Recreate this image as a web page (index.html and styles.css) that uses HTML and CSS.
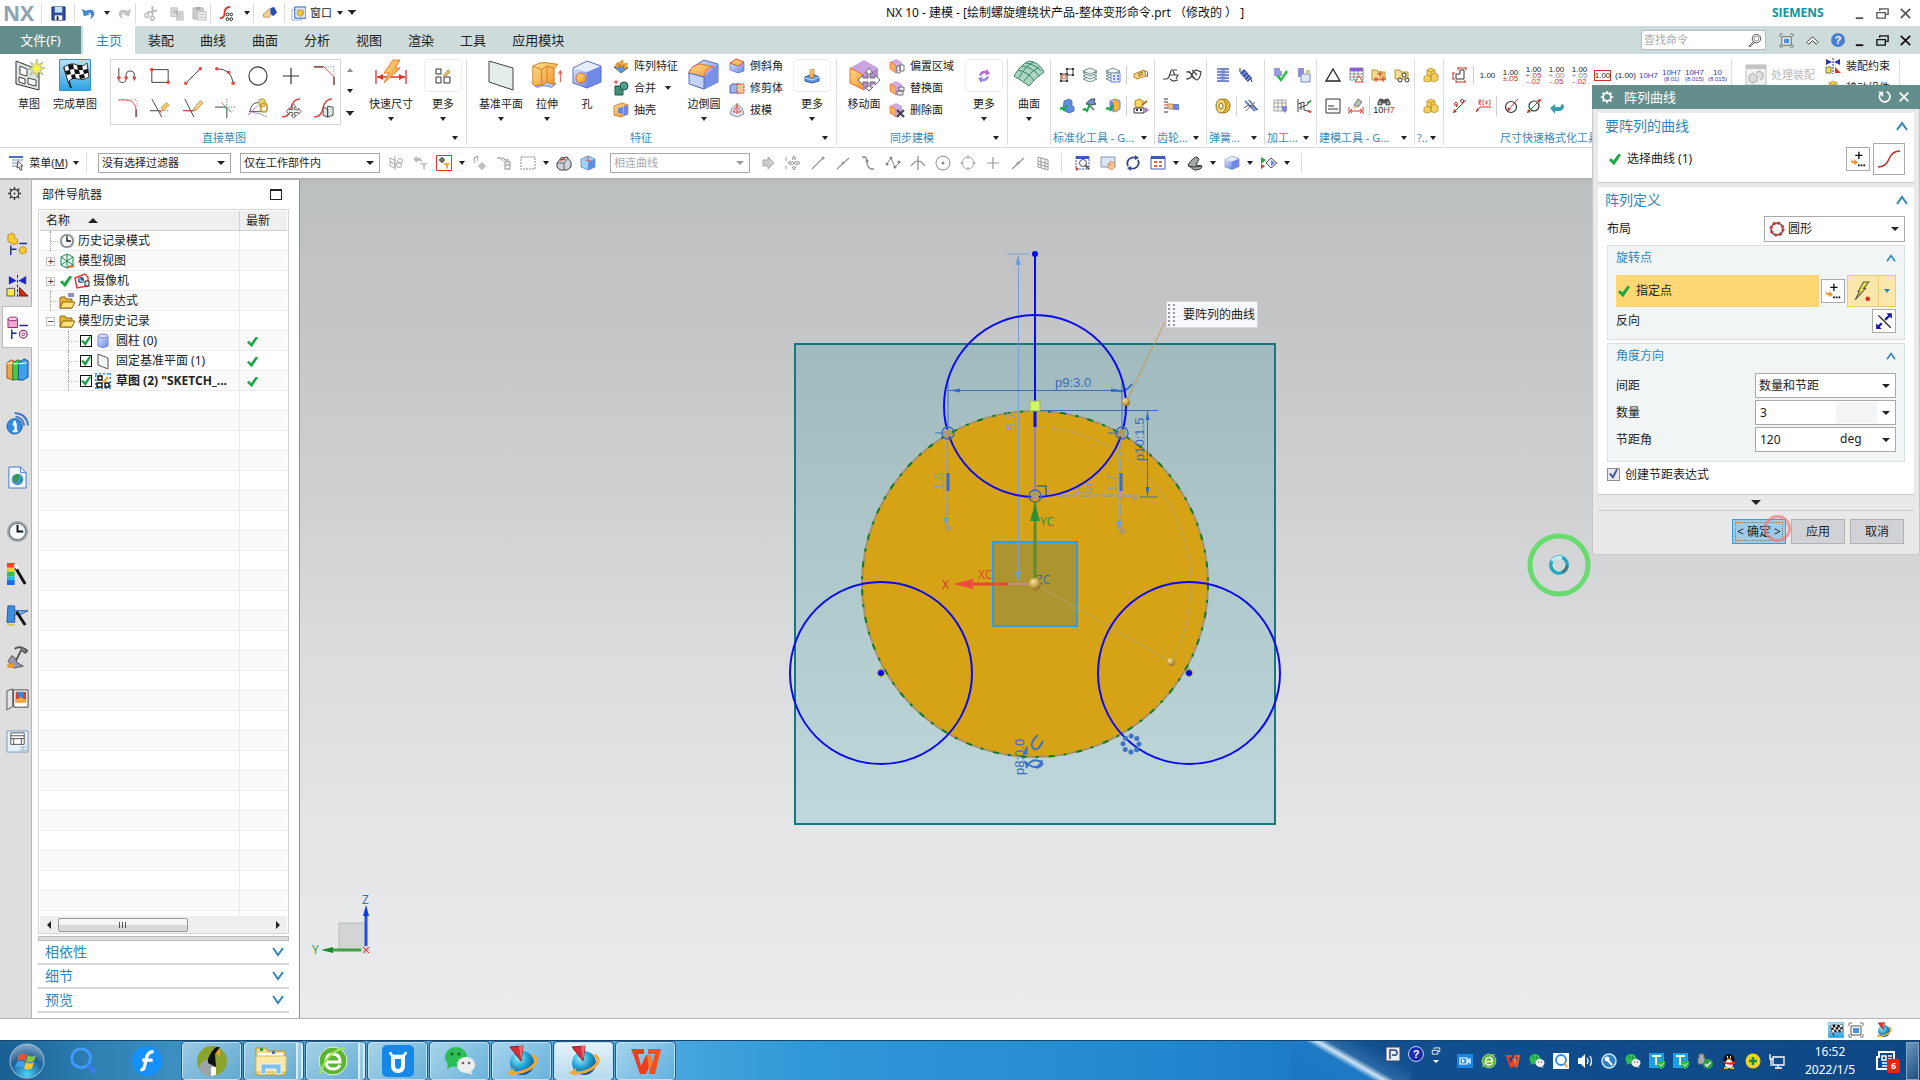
FILE: index.html
```html
<!DOCTYPE html>
<html lang="zh-CN">
<head>
<meta charset="utf-8">
<title>NX 10 - 建模</title>
<link rel="stylesheet" href="styles.css">
</head>
<body>
<svg class="defs" aria-hidden="true">
<defs>
<linearGradient id="gBlue" x1="0" y1="0" x2="1" y2="1"><stop offset="0" stop-color="#dbe7ff"/><stop offset="1" stop-color="#6b86e8"/></linearGradient>
<linearGradient id="gOr" x1="0" y1="0" x2="1" y2="1"><stop offset="0" stop-color="#ffe08a"/><stop offset="1" stop-color="#f0922c"/></linearGradient>
<linearGradient id="gSky" x1="0" y1="0" x2="0" y2="1"><stop offset="0" stop-color="#b9e2f7"/><stop offset="1" stop-color="#2aa3e3"/></linearGradient>
<linearGradient id="gPlane" x1="0" y1="0" x2="0" y2="1"><stop offset="0" stop-color="#a1babe"/><stop offset="1" stop-color="#bfd8dc"/></linearGradient>
<radialGradient id="gBall" cx=".35" cy=".3" r=".8"><stop offset="0" stop-color="#f5e2a4"/><stop offset=".5" stop-color="#c9a648"/><stop offset="1" stop-color="#7c611e"/></radialGradient>
<radialGradient id="gOrb" cx=".5" cy=".9" r="1"><stop offset="0" stop-color="#48d1f5"/><stop offset=".5" stop-color="#1c5f98"/><stop offset="1" stop-color="#a9bfd0"/></radialGradient>
<radialGradient id="gGlobe" cx=".35" cy=".3" r=".8"><stop offset="0" stop-color="#9df0f5"/><stop offset=".5" stop-color="#1f9fd4"/><stop offset="1" stop-color="#0b3f8e"/></radialGradient>
</defs>
<symbol id="tri" viewBox="0 0 8 5"><path d="M1 0h6L4 4z" fill="#222"/></symbol>
<symbol id="cube" viewBox="0 0 32 32"><path d="M2 9 16 2l14 5-14 6z" fill="#e4eefc"/><path d="M2 9l14 4v16L2 24z" fill="url(#gBlue)"/><path d="M16 13 30 7v16l-14 6z" fill="#7088e6"/><path d="M2 9 16 2l14 5v16l-14 6-14-5z" fill="none" stroke="#5a6fb8"/></symbol>
<symbol id="hole" viewBox="0 0 32 32"><use href="#cube"/><circle cx="10" cy="19" r="5" fill="url(#gOr)" stroke="#d9692a"/></symbol>
<symbol id="fillet" viewBox="0 0 32 32"><path d="M1 13C3 8 8 6 16 1l14 4v18l-14 7-14-5z" fill="url(#gBlue)" stroke="#5a6fb8"/><path d="M1 14c2-6 6-8 12-9l13 3c-7 1-9 4-10 10z" fill="url(#gOr)" stroke="#f06a2a"/><path d="M16 18v12l14-7V5z" fill="#7890e8"/><path d="M1 14v11l15 5V18z" fill="#c4d2fa" stroke="#5a6fb8"/></symbol>
<symbol id="extrude" viewBox="0 0 36 32"><path d="M2 26q12-6 26 0l-5 4q-8-4-16 0z" fill="#b5cbf5" stroke="#5a6fb8"/><path d="M2 6q8-5 14-4l14 2-4 5v18l-8-3-5 3-9 1-2-2z" fill="url(#gOr)" stroke="#c77b1d"/><path d="M2 6l10 4 6-4 8 3M12 10v17M18 6v18" fill="none" stroke="#c77b1d"/><path d="M33 24V12M31 15l2-4 2 4" fill="none" stroke="#d63c30"/></symbol>
<symbol id="datum" viewBox="0 0 32 32"><path d="M4 2l24 7v22L4 23z" fill="#e4ede9" stroke="#444"/></symbol>
<symbol id="moveface" viewBox="0 0 32 32"><path d="M2 9 16 1l14 8-14 7z" fill="#caa3e0"/><path d="M2 9l14 7v15L2 24z" fill="url(#gOr)" stroke="#f06a2a"/><path d="M16 16 30 9v14l-14 8z" fill="#b78bd4"/><path d="M21 9l4 5h-3v5h5v-3l5 5-5 5v-3h-5v5h3l-4 4-4-4h3v-5h-5v3l-5-5 5-5v3h5v-5h-3z" fill="#fff" stroke="#666"/></symbol>
<symbol id="sketch" viewBox="0 0 32 32"><path d="M3 2l23 9v20L3 25z" fill="#dfe6e2" stroke="#333"/><path d="M7 7l7 3v7l-7-2zM6 18l6 2v5l-6-2zM15 19l8 2v6l-8-2z" fill="#fff" stroke="#444"/><path d="M24 0l1 6 5-3-3 5 5 1-5 2 3 5-5-3-1 6-2-6-5 3 3-5-5-1 5-2-3-5 5 3z" fill="#f8ee4c" stroke="#7d9bb5" stroke-width=".6"/></symbol>
<symbol id="flag" viewBox="0 0 32 32"><path d="M.5.5h31v31H.5z" fill="url(#gSky)" stroke="#3a93c8"/><path d="M5 8 12 29" stroke="#222" stroke-width="2"/><path d="M5 8q8-5 13-2t10-2l2 14q-5 4-11 2t-10 3z" fill="#fff" stroke="#333"/><path d="M9 6l5-1 1 5-5 1zM18 6l5 0 1 5-5 0zM6 12l5-1 1 4-4 1zM15 10l5 1 1 4-5 0zM24 11l5-1 0 4-4 1zM12 16l4-1 1 5-4 0zM20 16l5-1 1 4-5 1z" fill="#111"/></symbol>
<symbol id="quick" viewBox="0 0 32 32"><path d="M1 11v14M31 11v14M2 18h28" stroke="#d8372c" stroke-width="1.3" fill="none"/><path d="M2 18l6-3v6zM30 18l-6-3v6z" fill="#d8372c"/><path d="M18 1l7 0-5 8h5L9 24l5-10h-5z" fill="url(#gOr)" stroke="#ec7a29"/></symbol>
<symbol id="more1" viewBox="0 0 16 16"><path d="M1 1h5v5H1zM1 9h5v6H1zM9 9h6v6H9z" fill="none" stroke="#333"/><path d="M8 8l5-6 2 2-5 5z" fill="#ecc06b" stroke="#8a6d34" stroke-width=".6"/></symbol>
<symbol id="pad" viewBox="0 0 16 16"><path d="M1 9l8-3 6 3v4l-7 2-7-2z" fill="#5d94dc" stroke="#345c9e"/><path d="M6 2l4-1v8l-4 1z" fill="url(#gOr)" stroke="#c77b1d" stroke-width=".6"/><path d="M1 10l7 2 7-3" stroke="#cfe0fa" fill="none"/></symbol>
<symbol id="swirl" viewBox="0 0 16 16"><path d="M3 7q2-5 7-4l1-2 3 5-5 1 1-2q-4 0-5 3z" fill="#b667d0"/><path d="M13 9q-2 5-7 4l-1 2-3-5 5-1-1 2q4 0 5-3z" fill="#9b82e8"/></symbol>
<symbol id="mesh" viewBox="0 0 32 32"><path d="M1 17Q8 5 16 2q10 1 15 11-9 6-15 14Q8 21 1 17z" fill="#a9d5c1" stroke="#3b8467"/><path d="M5 11q12 3 16 11M9 7q12 2 17 10M13 4q10 2 15 8M6 19q6-12 15-16M11 22q6-9 15-14" fill="none" stroke="#3b8467"/></symbol>
<symbol id="g1" viewBox="0 0 24 22"><path d="M3 2v11a4 4 0 0 0 8 2V10a4 4 0 0 1 9 0v6" fill="none" stroke="#333"/><g fill="#e34c3e"><circle cx="3" cy="13" r="2"/><circle cx="11" cy="13" r="2"/><circle cx="20" cy="13" r="2"/></g></symbol>
<symbol id="g2" viewBox="0 0 24 22"><path d="M3 4h18v14H3z" fill="none" stroke="#333"/><g fill="#e34c3e"><circle cx="3" cy="4" r="2"/><circle cx="21" cy="18" r="2"/></g></symbol>
<symbol id="g3" viewBox="0 0 24 22"><path d="M4 19 20 3" stroke="#333"/><g fill="#e34c3e"><circle cx="4" cy="19" r="2"/><circle cx="20" cy="3" r="2"/></g></symbol>
<symbol id="g4" viewBox="0 0 24 22"><path d="M3 3q16 0 18 16" fill="none" stroke="#333"/><g fill="#e34c3e"><circle cx="3" cy="3" r="2"/><circle cx="16" cy="7" r="2"/><circle cx="21" cy="19" r="2"/></g></symbol>
<symbol id="g5" viewBox="0 0 24 22"><circle cx="12" cy="11" r="10" fill="none" stroke="#333" stroke-width="1.2"/></symbol>
<symbol id="g6" viewBox="0 0 24 22"><path d="M12 2v18M3 11h18" stroke="#333" stroke-width="1.3"/></symbol>
<symbol id="g7" viewBox="0 0 24 22"><path d="M1 1h22v20" fill="none" stroke="#666" stroke-dasharray="1 2"/><path d="M1 1h11l11 11v9" fill="none" stroke="#e34c3e"/><path d="M1 1h10M23 12v9" stroke="#333"/></symbol>
<symbol id="g8" viewBox="0 0 24 22"><path d="M3 2h20v19" fill="none" stroke="#666" stroke-dasharray="1 2"/><path d="M3 2h6q13 0 13 12v7" fill="none" stroke="#e34c3e"/><path d="M22 13v8" stroke="#333"/></symbol>
<symbol id="g9" viewBox="0 0 24 22"><path d="M3 1l11 20M1 14h9" stroke="#333" fill="none"/><path d="M11 14h12" stroke="#333" stroke-dasharray="1 2"/><path d="M13 11l6-6 3 3-6 6z" fill="#f3c65e" stroke="#a07c2c" stroke-width=".6"/><path d="M12 12l2 4-3 0z" fill="#e34c3e"/></symbol>
<symbol id="g10" viewBox="0 0 24 22"><path d="M3 1l10 20M1 14h11" stroke="#333" fill="none"/><path d="M4 14h10" stroke="#e34c3e"/><path d="M12 14l2-4 6-7 3 2-7 8z" fill="#f3d67e" stroke="#a07c2c" stroke-width=".8"/></symbol>
<symbol id="g11" viewBox="0 0 24 22"><path d="M1 10h13v12" stroke="#333" fill="none"/><path d="M14 1v8M16 10h7" stroke="#333" stroke-dasharray="1 2"/><path d="M8 5l11 11" stroke="#e34c3e"/></symbol>
<symbol id="g12" viewBox="0 0 24 22"><path d="M3 15q2-10 9-10M2 15h20" fill="none" stroke="#444"/><path d="M6 16q8 0 16 5" fill="none" stroke="#999"/><path d="M1 19l10-10" stroke="#b35bd0"/><rect x="13" y="1" width="7" height="9" rx="3" fill="#f1d675" stroke="#a78c34"/><rect x="15" y="6" width="7" height="9" rx="3" fill="none" stroke="#c7a73c" stroke-width="2"/></symbol>
<symbol id="g13" viewBox="0 0 24 22"><path d="M2 21q8 0 10-10T22 1" fill="none" stroke="#e0493c" stroke-width="1.6"/><path d="M15 7l3 3h-2v3h4v-2l3 4-3 3v-2h-4v3h2l-3 3-3-3h2v-3h-4v2l-3-3 3-4v2h4v-3h-2z" fill="#fff" stroke="#555"/></symbol>
<symbol id="g14" viewBox="0 0 24 22"><path d="M1 21q8 0 10-10T21 1" fill="none" stroke="#e0493c" stroke-width="1.6"/><path d="M11 10l5 2v9l-5-2zM16 9l6 1v9l-6 2z" fill="#dfe6e2" stroke="#444"/></symbol>
<symbol id="arrf" viewBox="0 0 16 16"><path d="M1 9l7-3 7 4-7 5z" fill="#5d94dc" stroke="#345c9e" stroke-width=".7"/><path d="M3 10V6l3-2v5zM7 9V4l3-2v6zM11 11V6l3-1v5z" fill="#f2b13c" stroke="#b56c18" stroke-width=".6"/></symbol>
<symbol id="unite" viewBox="0 0 16 16"><path d="M1 2h4M3 0v4" stroke="#d8372c"/><path d="M2 6h8v9H2z" fill="#3d8d78" stroke="#225445"/><circle cx="11" cy="6" r="4" fill="#4da08a" stroke="#225445"/></symbol>
<symbol id="shell" viewBox="0 0 16 16"><path d="M1 4l8-3 6 2v9l-7 3-7-2z" fill="url(#gOr)" stroke="#a8661c" stroke-width=".7"/><path d="M5 6l5-1v7l-5-1zM11 4v10l4-2V3z" fill="#6b86e8"/></symbol>
<symbol id="chamf" viewBox="0 0 16 16"><path d="M1 5l7-3 7 3v8l-6 2-8-3z" fill="url(#gBlue)" stroke="#5a6fb8" stroke-width=".7"/><path d="M1 5l6-4 8 3-6 4z" fill="#f8c170" stroke="#e3512f"/></symbol>
<symbol id="trimb" viewBox="0 0 16 16"><path d="M1 6l2-2h8v9H1z" fill="#9eb2f2" stroke="#4f63b0"/><path d="M8 4h7v9H8z" fill="#f6c68d" stroke="#d8372c" stroke-dasharray="2 1"/></symbol>
<symbol id="draft" viewBox="0 0 16 16"><path d="M8 2l5 4 2 6-7 3-7-3 2-6z" fill="#dbe7ff" stroke="#666" stroke-width=".7"/><path d="M8 1v11M4 10l4-6 4 6z" stroke="#e3512f" fill="none"/></symbol>
<symbol id="syn" viewBox="0 0 16 16"><path d="M1 4l6-3 6 3-6 3z" fill="#d0abe2"/><path d="M1 4l6 3v8l-6-4z" fill="#f6b35c" stroke="#f0632a" stroke-width=".7"/><path d="M7 7l6-3v7l-6 4z" fill="#c6a3dc"/></symbol>
<symbol id="syn1" viewBox="0 0 16 16"><use href="#syn"/><path d="M8 8h3v7H8zM11 7h4v6h-4z" fill="#fff" stroke="#555" stroke-width=".8"/></symbol>
<symbol id="syn2" viewBox="0 0 16 16"><use href="#syn"/><path d="M8 11h6v4H8zM10 7h5v4h-5z" fill="#e8e8e8" stroke="#555" stroke-width=".8"/></symbol>
<symbol id="syn3" viewBox="0 0 16 16"><use href="#syn"/><path d="M8 8l7 7M15 8l-7 7" stroke="#444" stroke-width="2"/></symbol>
<symbol id="std1" viewBox="0 0 16 16"><path d="M2 7h6v7H2zM8 2h6v6H8z" fill="none" stroke="#444"/><path d="M1 6h2v2H1zM7 6h2v2H7zM1 13h2v2H1zM7 13h2v2H7zM7 1h2v2H7zM13 1h2v2h-2zM13 7h2v2h-2z" fill="#333"/><circle cx="5" cy="10" r="2" fill="none" stroke="#ec5a31"/></symbol>
<symbol id="layers" viewBox="0 0 16 16"><g fill="#eef3f3" stroke="#5a7876" stroke-width=".8"><path d="M1 12l7-3 7 3-7 3z"/><path d="M1 9l7-3 7 3-7 3z"/><path d="M1 6l7-3 7 3-7 3z"/><path d="M1 4l7-3 7 3-7 3z"/></g></symbol>
<symbol id="layers2" viewBox="0 0 16 16"><use href="#layers"/><path d="M6 6h9v9H6z" fill="#e5ecff" stroke="#6f86d6"/><path d="M8 9h2M8 12h2M12 9h2M12 12h2" stroke="#4966c4" stroke-width="1.5"/></symbol>
<symbol id="tag" viewBox="0 0 16 16"><path d="M1 7l10-4 2 6-9 3-3-2z" fill="#f5d28a" stroke="#b2852f"/><path d="M5 7l5-2M5 9l5-2" stroke="#98661c"/><path d="M12 4q4 0 2 6" fill="none" stroke="#c24"/></symbol>
<symbol id="chk" viewBox="0 0 16 16"><path d="M1 9l3-2 2 3 6-8 3 1-8 12z" fill="#19a843"/></symbol>
<symbol id="std2" viewBox="0 0 16 16"><path d="M5 3l5-2 3 2v5l2 1v4l-5 2-6-3z" fill="#5d8de0" stroke="#345c9e" stroke-width=".7"/><path d="M1 11l2-1 2 2 3-5" stroke="#19a843" stroke-width="2" fill="none"/></symbol>
<symbol id="std3" viewBox="0 0 16 16"><path d="M4 6q4-6 9-5l-1 3 2 2-4 1z" fill="#6d90d8" stroke="#445"/><path d="M7 7l5 5" stroke="#889" stroke-width="2"/><path d="M1 12l2-1 2 2 3-7" stroke="#19a843" stroke-width="2" fill="none"/></symbol>
<symbol id="std4" viewBox="0 0 16 16"><path d="M5 3l5-2 5 2v8l-5 3-5-2z" fill="#f4b53f" stroke="#6b86e8"/><path d="M5 3l4 2v8l-4-2z" fill="#5d8de0"/><path d="M1 11l2-1 2 2 3-5" stroke="#19a843" stroke-width="2" fill="none"/></symbol>
<symbol id="std5" viewBox="0 0 16 16"><path d="M2 3l4-2 4 2v5l-4 2-4-2z" fill="#f8d563" stroke="#b98a20"/><path d="M1 10h10v5H1z" fill="#fff" stroke="#333"/><path d="M3 12h2M7 12h2" stroke="#333" stroke-width="2"/><path d="M12 9l4 3-4 3z" fill="#b86bd4"/><path d="M9 7l5-4" stroke="#a2762c" stroke-width="2"/></symbol>
<symbol id="gear1" viewBox="0 0 16 16"><path d="M0 12h4q2-1 3-5t2-4h5M6 8h9l-2 4M10 4l2 4M7 12l3 2 5-1" fill="none" stroke="#444" stroke-width="1.2"/></symbol>
<symbol id="gear2" viewBox="0 0 16 16"><path d="M0 5q4-1 6 3t5 5q3-1 4-8l-5-2q-3 1-4 5t-6 4M6 3l5 5M3 4l5 8" fill="none" stroke="#444" stroke-width="1.2"/></symbol>
<symbol id="handl" viewBox="0 0 16 16"><path d="M1 1h4M1 4h4M1 10h4M1 14h4" stroke="#333"/><path d="M1 7h3" stroke="#d8372c"/><path d="M4 6h6v5H6z" fill="#f3c492" stroke="#a66d2e" stroke-width=".7"/><path d="M10 6h6v6h-6z" fill="#6f86d6"/></symbol>
<symbol id="spring1" viewBox="0 0 16 16"><path d="M2 2h12M2 5h12M2 8h12M2 11h12M2 14h12" stroke="#4c5fb8" stroke-width="1.6"/><path d="M2 2l12 3M2 5l12 3M2 8l12 3M2 11l12 3" stroke="#8897dc"/></symbol>
<symbol id="spring2" viewBox="0 0 16 16"><path d="M4 4l8 9" stroke="#4456a8" stroke-width="6"/><path d="M4 8l5-4M6 11l5-4M9 13l4-4" stroke="#aab4ea"/><path d="M2 5l0-4M13 12l1 3" stroke="#333"/></symbol>
<symbol id="disc" viewBox="0 0 16 16"><ellipse cx="9" cy="8" rx="6" ry="7" fill="#e8b93c" stroke="#93701a"/><ellipse cx="6" cy="8" rx="5" ry="7" fill="#f5d878" stroke="#93701a"/><ellipse cx="6" cy="8" rx="2" ry="3" fill="#fff" stroke="#93701a"/></symbol>
<symbol id="springx" viewBox="0 0 16 16"><path d="M2 3l10 10M6 2l8 10" stroke="#6c7fd0" stroke-width="2"/><path d="M1 10q6-6 14 2" fill="none" stroke="#556"/><path d="M3 13l9-9" stroke="#777"/></symbol>
<symbol id="mach1" viewBox="0 0 16 16"><path d="M1 1h6v3h2v5H1z" fill="#9a9ae0"/><path d="M3 9l3-1 2 3 5-8 2 2-7 10z" fill="#2fbf4f"/></symbol>
<symbol id="mach2" viewBox="0 0 16 16"><path d="M2 1h6v9H2z" fill="#8f8fda"/><path d="M5 7h9v8H5z" fill="#dfe6fa" stroke="#7788c4"/><path d="M10 3h4v4h-4z" fill="#c7c79a"/></symbol>
<symbol id="mach3" viewBox="0 0 16 16"><path d="M1 2h12v11H1zM1 5h12M1 9h12M5 2v11M9 2v11" fill="#fffde0" stroke="#8a8aa8" stroke-width=".8"/><path d="M9 8h5v4l-2 3-3-3z" fill="#7f86d8"/></symbol>
<symbol id="mach4" viewBox="0 0 16 16"><path d="M2 1v13M2 6l6-2v8l7 2M5 12V5M3 10l8-3 4-5" fill="none" stroke="#444"/><path d="M12 13l3 1" stroke="#d33" stroke-width="2"/><path d="M11 5l4-2" stroke="#2a9d4a" stroke-width="1.6"/></symbol>
<symbol id="mt1" viewBox="0 0 16 16"><path d="M8 2l7 12H1z" fill="none" stroke="#222" stroke-width="1.3"/></symbol>
<symbol id="mt2" viewBox="0 0 16 16"><path d="M2 1h13v12H2zM2 4h13M2 7h13M2 10h13M6 2v11M10 2v11" fill="#fff" stroke="#777" stroke-width=".8"/><path d="M2 1h13v3H2z" fill="#8b62bd"/><path d="M11 9l4 6H7z" fill="#fff" stroke="#d8372c"/></symbol>
<symbol id="mt3" viewBox="0 0 16 16"><path d="M1 3h5l1 2h7v8H1z" fill="#f4dc8d" stroke="#b9962f"/><path d="M9 4v6M6 7h6M12 9v6M9 12h6M5 10v5M3 12h5" stroke="#d8372c"/></symbol>
<symbol id="mt4" viewBox="0 0 16 16"><path d="M1 3h5l1 2h7v7H1z" fill="#f4dc8d" stroke="#b9962f"/><g fill="#fff" stroke="#333"><circle cx="10" cy="8" r="2"/><circle cx="6" cy="13" r="2"/><circle cx="13" cy="13" r="2"/></g></symbol>
<symbol id="mt5" viewBox="0 0 16 16"><path d="M1 1h14v14H1z" fill="#fff" stroke="#333"/><path d="M3 8h6M3 11h10" stroke="#333"/></symbol>
<symbol id="mt6" viewBox="0 0 16 16"><path d="M10 1l4 3-4 5-4-2z" fill="#b7c4ac" stroke="#777"/><path d="M5 8l3 1-2 2z" fill="#e8b93c"/><path d="M1 9v7M15 9v7M2 13h12M4 11l-2 2 2 2M12 11l2 2-2 2" fill="none" stroke="#d8372c"/></symbol>
<symbol id="bino" viewBox="0 0 14 8"><path d="M1 4l2-3h2l1 1h2l1-1h2l2 3v3H9V5H5v2H1z" fill="#555" stroke="#333" stroke-width=".7"/><circle cx="3" cy="5" r="1.500" fill="#aaa"/><circle cx="11" cy="5" r="1.500" fill="#aaa"/></symbol>
<symbol id="ycubes" viewBox="0 0 16 16"><g fill="#f5cf5e" stroke="#b88f26" stroke-width=".8"><path d="M4 3l4-2 4 2v5l-4 2-4-2z"/><path d="M8 8l4-2 3 2v5l-4 2-3-2z"/><path d="M1 10l3-2 4 2v4l-4 1-3-1z"/></g><path d="M4 3l4 2 4-2M8 5v5" stroke="#b88f26" fill="none" stroke-width=".8"/></symbol>
<symbol id="d1" viewBox="0 0 16 16"><path d="M4 12V7h4V3h4v9z" fill="none" stroke="#333"/><path d="M6 1h8M6 0v3M14 0v3M1 6v6M0 6h3M0 12h3M4 15h9M4 13v3M13 13v3" stroke="#c8372f"/></symbol>
<symbol id="d4" viewBox="0 0 16 16"><circle cx="8" cy="9" r="5.500" fill="none" stroke="#333" stroke-width="1.2"/><path d="M4 13L15 1" stroke="#c8372f"/><path d="M4 13l1-4 3 3z" fill="#c8372f"/></symbol>
<symbol id="d5" viewBox="0 0 16 16"><circle cx="8" cy="8" r="5" fill="none" stroke="#333" stroke-width="1.2"/><path d="M1 15L15 1" stroke="#c8372f"/><path d="M1 15l1-4 3 3zM15 1l-1 4-3-3z" fill="#c8372f"/></symbol>
<symbol id="back" viewBox="0 0 16 16"><path d="M1 10l5-4v3h5q2-1 1-3l3 1q0 6-5 6H6v3z" fill="#3d9ea8"/></symbol>
<symbol id="asmg" viewBox="0 0 22 22"><path d="M1 1h20v20H1z" fill="#f2f2f2" stroke="#bbb"/><path d="M1 1h20v4H1z" fill="#c4c4c4"/><path d="M4 12l4-3 4 3v5l-4 2-4-2zM11 9l3-2 4 2v5l-3 2" fill="#ddd" stroke="#aaa"/></symbol>
<symbol id="cons" viewBox="0 0 16 16"><path d="M1 1l6 3-6 3zM15 1L9 4l6 3z" fill="#2d33b8"/><path d="M8 0v16" stroke="#333" stroke-dasharray="2 1"/><path d="M1 9h5v6H1z" fill="#f7e44b" stroke="#776"/><path d="M10 9l6 6h-6z" fill="#cf3b22"/></symbol>
<symbol id="save" viewBox="0 0 16 16"><path d="M1 1h14v14H1z" fill="#2d4f9c" stroke="#1b2d66"/><path d="M4 1h8v6H4z" fill="#bfe3f5"/><path d="M4 10h8v5H4z" fill="#fff"/><path d="M6 11h2v4H6z" fill="#222"/></symbol>
<symbol id="undo" viewBox="0 0 16 16"><path d="M1 3l2 8 7-2-3-1q4-2 4 2 0 2-2 4 6-2 5-7-1-5-9-2z" fill="#3f8ad0"/></symbol>
<symbol id="redo" viewBox="0 0 16 16"><path d="M15 3l-2 8-7-2 3-1q-4-2-4 2 0 2 2 4-6-2-5-7 1-5 9-2z" fill="#c2c2c2"/></symbol>
<symbol id="cut" viewBox="0 0 16 16"><path d="M9 0v10M3 7l11-2" stroke="#bbb" stroke-width="2"/><circle cx="3" cy="10" r="2" fill="none" stroke="#bbb" stroke-width="1.5"/><circle cx="9" cy="13" r="2" fill="none" stroke="#bbb" stroke-width="1.5"/></symbol>
<symbol id="copy" viewBox="0 0 16 16"><path d="M1 2h7v9H1zM7 6h7v9H7z" fill="#ddd" stroke="#bbb"/><path d="M3 5h4M3 7h4M9 9h3M9 12h3" stroke="#aaa"/></symbol>
<symbol id="paste" viewBox="0 0 16 16"><path d="M1 2h11v12H1z" fill="#ccc" stroke="#bbb"/><path d="M4 1h5v3H4z" fill="#aaa"/><path d="M6 6h9v9H6z" fill="#eee" stroke="#bbb"/><path d="M8 9h5M8 12h5" stroke="#bbb"/></symbol>
<symbol id="scurve" viewBox="0 0 16 16"><path d="M1 13q5 0 5-6t6-6" fill="none" stroke="#d8372c" stroke-width="2"/><g fill="none" stroke="#222"><circle cx="9" cy="9" r="1.500"/><circle cx="13" cy="9" r="1.500"/><circle cx="9" cy="14" r="1.500"/><circle cx="13" cy="14" r="1.500"/></g></symbol>
<symbol id="hand" viewBox="0 0 16 16"><path d="M1 9l7-6 4 3-4 6-6 0z" fill="#f1cf98" stroke="#a67b3d" stroke-width=".7"/><path d="M9 2l4-1 3 6-4 4-3-3z" fill="#2b4bb2"/></symbol>
<symbol id="win" viewBox="0 0 16 16"><path d="M1 4h10v11H1z" fill="none" stroke="#3366bb" stroke-dasharray="1 1"/><path d="M4 1h12v12H4z" fill="#d6e5fb" stroke="#2d5db5"/><path d="M7 5l3-1 3 1v4l-3 2-3-2z" fill="#f8cb35" stroke="#b88f26"/></symbol>
<symbol id="min" viewBox="0 0 16 16"><path d="M4 13h8" stroke="currentColor" stroke-width="2"/></symbol>
<symbol id="rest" viewBox="0 0 16 16"><path d="M5 5V3h9v6h-3M2 7h9v6H2z" fill="none" stroke="currentColor" stroke-width="1.4"/></symbol>
<symbol id="x" viewBox="0 0 16 16"><path d="M3 3l10 10M13 3L3 13" stroke="currentColor" stroke-width="1.8"/></symbol>
<symbol id="mag" viewBox="0 0 16 16"><circle cx="9" cy="6" r="4.500" fill="none" stroke="#444"/><circle cx="9" cy="6" r="2.500" fill="none" stroke="#888"/><path d="M6 9l-5 5 1 1 5-5" fill="none" stroke="#444"/></symbol>
<symbol id="full" viewBox="0 0 16 16"><path d="M1 4V1h3M12 1h3v3M15 12v3h-3M4 15H1v-3" fill="none" stroke="#777"/><path d="M3 4h10v9H3z" fill="#fff" stroke="#555"/><path d="M5 6h6v5H5z" fill="#4b8fe0"/></symbol>
<symbol id="up" viewBox="0 0 16 16"><path d="M2 10l6-6 6 6-2 2-4-4-4 4z" fill="#fff" stroke="#333"/></symbol>
<symbol id="menu" viewBox="0 0 16 16"><path d="M0 2h14" stroke="#4c6fb8" stroke-width="2"/><path d="M3 5h11M3 8h7M3 11h6" stroke="#6f87b8"/><path d="M9 6l5 5-2 0 1 4-2 0-1-3-2 1z" fill="#eee" stroke="#333" stroke-width=".8"/></symbol>
<symbol id="t1" viewBox="0 0 16 16"><path d="M2 3l5 2v8l-5-2zM7 1v14M2 7l5 2" fill="none" stroke="#aaa"/><circle cx="12" cy="6" r="2.500" fill="none" stroke="#aaa"/><circle cx="11" cy="10" r="2.500" fill="none" stroke="#aaa"/></symbol>
<symbol id="t2" viewBox="0 0 16 16"><path d="M1 4l4-3v2q5-1 5 4-2-2-5-1v2z" fill="#bbb"/><path d="M7 8h9l-3 3v4l-2-1v-3z" fill="#ccc"/></symbol>
<symbol id="t3" viewBox="0 0 16 16"><path d="M.5.5h15v15H.5z" fill="#fff" stroke="#d8372c"/><path d="M3 5h6M6 2v6" stroke="#444"/><circle cx="6" cy="5" r="2" fill="none" stroke="#444"/><path d="M7 8h7l-2 3v3l-2-1v-2z" fill="#f2a93a"/></symbol>
<symbol id="t4" viewBox="0 0 16 16"><path d="M3 8Q0 2 6 1M1 4l5-3-1 5" stroke="#aaa" fill="none"/><path d="M10 7v8M6 11h8M8 9h4v4H8z" stroke="#aaa" fill="none"/></symbol>
<symbol id="t5" viewBox="0 0 16 16"><path d="M1 3h4l2 3M7 2l2 3h4M9 7h5v7H9zM9 10h5" stroke="#aaa" fill="none" stroke-width="1.3"/></symbol>
<symbol id="t6" viewBox="0 0 16 16"><path d="M1 2h14v12H1z" fill="none" stroke="#888" stroke-dasharray="2 1"/></symbol>
<symbol id="t7" viewBox="0 0 16 16"><path d="M1 8l4-5 6-1 4 5v5l-4 3-7 0-3-3z" fill="#cfd3da" stroke="#444"/><path d="M1 8h7l4-5M8 8v7" fill="none" stroke="#666"/><path d="M4 5l5-1" stroke="#d8372c" stroke-width="1.500"/></symbol>
<symbol id="t8" viewBox="0 0 16 16"><path d="M1 4l7-3 7 3v8l-7 3-7-3z" fill="#9fd0f5" stroke="#4a78bb" stroke-width=".7"/><path d="M8 7l7-3v8l-7 3z" fill="#5f8de0"/><path d="M8 1v5M5 5l6 1" stroke="#d8372c" stroke-width=".7"/></symbol>
<symbol id="t9" viewBox="0 0 16 16"><path d="M3 5h5V2l6 6-6 6v-3H3z" fill="#ccc" stroke="#aaa"/></symbol>
<symbol id="t10" viewBox="0 0 16 16"><path d="M9 1l2 3H7zM9 15l2-3H7zM3 8l3-2v4zM15 8l-3-2v4zM7 6l4 4M11 6l-4 4M1 2v4M1 11v3" stroke="#999" fill="none"/></symbol>
<symbol id="t11" viewBox="0 0 16 16"><path d="M2 14L14 2" stroke="#999" stroke-width="1.3"/><circle cx="13" cy="3" r="1.500" fill="#999"/></symbol>
<symbol id="t12" viewBox="0 0 16 16"><path d="M2 14L14 3" stroke="#999" stroke-width="1.3"/><circle cx="8" cy="8" r="1.500" fill="#999"/></symbol>
<symbol id="t13" viewBox="0 0 16 16"><path d="M2 2h2q3 0 3 5t4 7h3" fill="none" stroke="#888" stroke-width="1.3"/><circle cx="7" cy="6" r="1.500" fill="#888"/></symbol>
<symbol id="t14" viewBox="0 0 16 16"><path d="M1 10L6 3l4 9 5-5" fill="none" stroke="#888"/><circle cx="6" cy="3" r="1.500" fill="#888"/><circle cx="10" cy="12" r="1.500" fill="#888"/><circle cx="2" cy="9" r="1.500" fill="#888"/><circle cx="14" cy="7" r="1.500" fill="#888"/></symbol>
<symbol id="t15" viewBox="0 0 16 16"><path d="M8 1v14M1 11q7-10 14 0" fill="none" stroke="#888" stroke-width="1.2"/></symbol>
<symbol id="t16" viewBox="0 0 16 16"><circle cx="8" cy="8" r="7" fill="none" stroke="#888"/><circle cx="8" cy="8" r="1.500" fill="#888"/></symbol>
<symbol id="t17" viewBox="0 0 16 16"><circle cx="8" cy="8" r="6" fill="none" stroke="#aaa"/><path d="M8 0v4M8 12v4M0 8h4M12 8h4" stroke="#aaa"/></symbol>
<symbol id="t18" viewBox="0 0 16 16"><path d="M8 2v12M2 8h12" stroke="#999" stroke-width="1.2"/></symbol>
<symbol id="t19" viewBox="0 0 16 16"><path d="M3 2l10 3v10L3 12zM3 6l10 3M3 9l10 3M6 3v10M10 4v10" fill="none" stroke="#999"/></symbol>
<symbol id="v1" viewBox="0 0 16 16"><path d="M1 2h13v12H1z" fill="none" stroke="#3c5bc0" stroke-dasharray="2 1"/><path d="M1 1h13v3H1z" fill="#3c5bc0"/><circle cx="8" cy="8" r="3.500" fill="#fff" stroke="#555"/><path d="M10 10l4 4" stroke="#555" stroke-width="2"/><circle cx="2" cy="14" r="1.500" fill="#d8372c"/></symbol>
<symbol id="v2" viewBox="0 0 16 16"><path d="M1 2h14v10H1z" fill="#dbe7f8" stroke="#8797b5"/><path d="M8 8l2 2V6l2 1 2 0 1 5-3 3-4-2z" fill="#f3c492" stroke="#a66d2e" stroke-width=".5"/></symbol>
<symbol id="v3" viewBox="0 0 16 16"><path d="M3 11A6 6 0 0 1 11 3M13 5a6 6 0 0 1-8 8" fill="none" stroke="#34488e" stroke-width="1.8"/><path d="M10 0l4 3-4 2zM6 11v5l-4-3z" fill="#34488e"/></symbol>
<symbol id="v4" viewBox="0 0 16 16"><path d="M1 2h14v12H1z" fill="#fff" stroke="#3c5bc0"/><path d="M1 1h14v3H1z" fill="#3c5bc0"/><path d="M4 6h3v2H4zM9 6h3v2H9zM4 10h3v2H4zM9 10h3v2H9z" fill="#e8633c"/></symbol>
<symbol id="v5" viewBox="0 0 16 16"><path d="M1 10q5-8 9-8l2 2-3 6 6 1q0 4-8 4z" fill="#a5aaa8" stroke="#333"/><path d="M1 11q6 2 13 0" stroke="#333" fill="none"/></symbol>
<symbol id="v6" viewBox="0 0 16 16"><path d="M0 2l5 3-5 4z" fill="#2a9d4a"/><path d="M0 9l4 2-4 3z" fill="#d8372c"/><path d="M10 3l6 5-6 5-5-5z" fill="#e8ecf8" stroke="#555"/><path d="M10 5l4 3-4 3z" fill="#6b86e8"/></symbol>
<symbol id="cog" viewBox="0 0 16 16"><circle cx="8" cy="8" r="4.500" fill="none" stroke="currentColor" stroke-width="2"/><path d="M8 1v2M8 13v2M1 8h2M13 8h2M3 3l2 2M11 11l2 2M3 13l2-2M11 5l2-2" stroke="currentColor" stroke-width="2"/></symbol>
<symbol id="r0" viewBox="0 0 16 16"><circle cx="8" cy="8" r="4.500" fill="none" stroke="#333" stroke-width="1.300"/><circle cx="8" cy="8" r="1" fill="#333"/><path d="M8 1v2M8 13v2M1 8h2M13 8h2M3 3l2 2M11 11l2 2M3 13l2-2M11 5l2-2" stroke="#333" stroke-width="1.500"/></symbol>
<symbol id="r1" viewBox="0 0 24 24"><g fill="#f8cb35" stroke="#b88f26"><path d="M2 3l4-2 3 2v3l3 2v4l-4 1-6-3zM14 17l4-2 3 2v4l-4 2-3-2z"/></g><path d="M14 12h8M5 14v10M5 18h6" stroke="#1d2a8c" stroke-width="1.500"/></symbol>
<symbol id="r2" viewBox="0 0 24 24"><path d="M3 2l8 5-8 4zM21 2l-8 5 8 4z" fill="#2025c8"/><path d="M12 1v23" stroke="#222" stroke-dasharray="3 2"/><path d="M1 15h8v8H1z" fill="#ffe94a" stroke="#555"/><path d="M14 14l9 9h-9z" fill="#d42a14" stroke="#7a1a0c"/></symbol>
<symbol id="r3" viewBox="0 0 24 24"><path d="M1 3h10v9H1z" fill="#f0a8d0" stroke="#8b2f68"/><ellipse cx="6" cy="3" rx="5" ry="2" fill="#f9d0e6" stroke="#8b2f68"/><path d="M13 10h9M5 14v10M5 18h5" stroke="#1d2a8c" stroke-width="1.500"/><circle cx="17" cy="19" r="4" fill="none" stroke="#8b2f68" stroke-width="1.300"/><circle cx="17" cy="19" r="1.500" fill="none" stroke="#8b2f68"/></symbol>
<symbol id="r4" viewBox="0 0 24 24"><path d="M1 5l4-3 3 1v20l-7-2z" fill="#f2a545" stroke="#9b5c14"/><path d="M7 5l5-3 3 1v19l-8 1z" fill="#4cc44c" stroke="#1e7b22"/><path d="M13 5l6-4 4 2v17l-5 3h-5z" fill="#3f9fea" stroke="#14508f"/><path d="M1 6l6-1M7 6h6M13 6l9-1" stroke="#fff"/></symbol>
<symbol id="r5" viewBox="0 0 24 24"><circle cx="9" cy="15" r="8" fill="#2f8de4" stroke="#1a5da8"/><path d="M9 9v3M7 13h3v7M7 20h5" stroke="#fff" stroke-width="2.500" fill="none"/><path d="M10 5q8 1 9 9M9 1q13 1 14 13" fill="none" stroke="#4478c8" stroke-width="2"/></symbol>
<symbol id="r6" viewBox="0 0 24 24"><path d="M3 1h12l6 6v16H3z" fill="#f1f7ff" stroke="#4478c8"/><path d="M15 1v6h6" fill="none" stroke="#4478c8"/><circle cx="12" cy="14" r="6" fill="#4d8fd8"/><path d="M8 11q3-4 6-2l-1 5-3 4q-3-3-2-7zM15 13l3 1-3 4z" fill="#2d9d47"/></symbol>
<symbol id="clock" viewBox="0 0 24 24"><circle cx="12" cy="12" r="11" fill="#9ea4ab"/><circle cx="12" cy="12" r="8.500" fill="#f7fafc" stroke="#666"/><path d="M12 5v7h6" stroke="#111" fill="none" stroke-width="2"/></symbol>
<symbol id="r8" viewBox="0 0 24 24"><path d="M1 1h8v5H1z" fill="#f0431f"/><path d="M1 6h8v4H1z" fill="#f7d21e"/><path d="M1 10h8v5H1z" fill="#33c04b"/><path d="M1 15h8v5H1z" fill="#25b8e8"/><path d="M1 19h8v5H1z" fill="#1c6be0"/><path d="M10 6l10 17" stroke="#111" stroke-width="3"/><path d="M9 3l3 4" stroke="#fff" stroke-width="3"/></symbol>
<symbol id="r9" viewBox="0 0 24 24"><path d="M2 2h7v17H1z" fill="#3e8ee0" stroke="#1c5ba8"/><path d="M9 7h14l-8 4h-6v5" fill="#7fb4ee" stroke="#1c5ba8"/><path d="M11 8l9 14" stroke="#111" stroke-width="3"/><path d="M1 21l8 1" stroke="#d9c53c" stroke-width="2"/></symbol>
<symbol id="r10" viewBox="0 0 24 24"><path d="M9 3q6-4 13 2l-2 2-4-3-7 14" fill="none" stroke="#555" stroke-width="2"/><path d="M6 10l4 3 1 4 7 4-10 2-6-7z" fill="#9d97b5" stroke="#555"/><path d="M1 19l6-1 1 5-6 0z" fill="#f29a2c"/></symbol>
<symbol id="r11" viewBox="0 0 24 24"><path d="M1 3l6-2v18l-6 4z" fill="#e5e5e5" stroke="#555"/><path d="M8 2h15v18H8z" fill="#fff" stroke="#444"/><path d="M10 4h11v11H10z" fill="#e0382a"/><path d="M12 4h7l-2 8h-3z" fill="#2f8de4"/><path d="M10 12l5-2 6 2v3H10z" fill="#f7a93a"/></symbol>
<symbol id="r12" viewBox="0 0 24 24"><path d="M1 1h22v22H1z" fill="#e6f0fb" stroke="#7c97bb"/><path d="M5 3h14v12H5zM5 6h14M5 9h14M8 9v6M16 9v6" fill="#fff" stroke="#555"/><path d="M14 18h8M14 21h8M18 17v5" stroke="#9bb"/></symbol>
<symbol id="n1" viewBox="0 0 16 16"><path d="M8 1l6 3v8l-6 3-6-3V4zM2 4l6 4 6-4M8 8v7M2 12l6-4 6 4M8 1v7" fill="#e8f7ef" stroke="#188a55"/><path d="M9 14l6-1" stroke="#e8632c" stroke-width="2"/></symbol>
<symbol id="n2" viewBox="0 0 16 16"><path d="M1 5l10-4 3 3v9L3 15z" fill="#fff" stroke="#d8372c" stroke-width="1.400"/><circle cx="7" cy="7" r="3" fill="#34488e"/><path d="M6 5v3M6 8h3" stroke="#fff"/><path d="M11 8h4v5h-4z" fill="#eee" stroke="#222"/></symbol>
<symbol id="fold" viewBox="0 0 16 16"><path d="M1 4l1-1h4l1 2h6v9H1z" fill="#e8b32c" stroke="#8a6516"/><path d="M4 8h12l-3 6H1z" fill="#ffe27a" stroke="#8a6516"/></symbol>
<symbol id="foldx" viewBox="0 0 16 16"><use href="#fold" y="1"/><path d="M9 1h6M9 3h6" stroke="#1d2a8c"/></symbol>
<symbol id="cyl" viewBox="0 0 16 16"><path d="M3 3v10q5 3 10 0V3z" fill="url(#gBlue)" stroke="#7a86d8"/><ellipse cx="8" cy="3" rx="5" ry="2" fill="#d8defc" stroke="#7a86d8"/></symbol>
<symbol id="pln" viewBox="0 0 16 16"><path d="M3 1l10 4v11L3 12z" fill="#f4f8f5" stroke="#555"/></symbol>
<symbol id="skt" viewBox="0 0 16 16"><path d="M0 0h16v16H0z" fill="none" stroke="#2a8fe0" stroke-width="3" stroke-dasharray="2 2"/><path d="M3 3h4v4H3zM2 10h5v4H2zM10 10h4v4h-4z" fill="#fff" stroke="#111" stroke-width="1.400"/><path d="M7 9l5-6 2 2-5 5z" fill="#f2b13c"/></symbol>
<symbol id="chev" viewBox="0 0 12 10"><path d="M1 9l5-7 5 7" fill="none" stroke="#2e86b8" stroke-width="2"/></symbol>
<symbol id="chevd" viewBox="0 0 12 10"><path d="M1 1l5 7 5-7" fill="none" stroke="#2e86b8" stroke-width="2"/></symbol>
<symbol id="ptd" viewBox="0 0 20 20"><path d="M11 2v8M7 6h8" stroke="#111" stroke-width="1.500"/><path d="M2 9q0 4 4 3v-2l4 4-4 3v-2q-5 0-4-6z" fill="#f2922c"/><path d="M10 16h2v2h-2zM13 16h2v2h-2zM16 16h2v2h-2z" fill="#111"/></symbol>
<symbol id="scv" viewBox="0 0 24 24"><path d="M1 20q8 0 11-8T23 4" fill="none" stroke="#b5322a" stroke-width="1.500"/></symbol>
<symbol id="ringi" viewBox="0 0 16 16"><circle cx="8" cy="8" r="6" fill="none" stroke="#555" stroke-width="1.500"/><circle cx="8" cy="8" r="6" fill="none" stroke="#d8372c" stroke-width="3" stroke-dasharray="2.200 2.512"/></symbol>
<symbol id="boltp" viewBox="0 0 16 20"><path d="M9 1h5L9 7h2L1 18l4-8H4z" fill="#f3e23a" stroke="#555"/><circle cx="13" cy="17" r="2.200" fill="#d6301f"/></symbol>
<symbol id="rev" viewBox="0 0 16 16"><path d="M3 3l11 11" stroke="#111"/><path d="M3 13l3-3M9 7l4-4" stroke="#1a1aa8" stroke-width="2"/><path d="M15 1v5l-5-5zM1 15v-5l5 5z" fill="#1a1aa8"/></symbol>
<symbol id="reset" viewBox="0 0 16 16"><path d="M4 4a6 6 0 1 0 7-2" fill="none" stroke="#fff" stroke-width="2"/><path d="M1 2h6v6z" fill="#fff"/></symbol>
<symbol id="orb" viewBox="0 0 36 36"><circle cx="18" cy="18" r="17" fill="url(#gOrb)" stroke="#9fc3dc"/><path d="M10 12q4-3 8 0l-2 6q-4-3-8 0z" fill="#f0562a"/><path d="M19 12q4 3 8 0l-2 6q-4 3-8 0z" fill="#86c440"/><path d="M8 19q4-3 8 0l-2 6q-4-3-8 0z" fill="#3f9fe8"/><path d="M17 19q4 3 8 0l-2 6q-4 3-8 0z" fill="#fbc52c"/></symbol>
<symbol id="k1" viewBox="0 0 32 32"><circle cx="14" cy="13" r="10" fill="none" stroke="#3f9bff" stroke-width="3"/><path d="M21 20l8 8" stroke="#3f7bf0" stroke-width="4"/></symbol>
<symbol id="k2" viewBox="0 0 32 32"><circle cx="16" cy="16" r="16" fill="#1590ff"/><path d="M23 6q-7 0-8 9l-2 8q-1 3-4 2M11 15h11" stroke="#fff" stroke-width="3.500" fill="none"/></symbol>
<symbol id="k3" viewBox="0 0 32 32"><circle cx="16" cy="16" r="15" fill="#8aa32a"/><path d="M3 24q2-10 9-9l7 0-1 15q-9 3-15-6z" fill="#9da4a8"/><path d="M12 14q3-8 8-12l4 0-5 7 1 13-8-4z" fill="#111"/><path d="M15 22h5v8l-5 1z" fill="#fff"/><path d="M20 8l4-5 0 9z" fill="#f29a1c"/></symbol>
<symbol id="k4" viewBox="0 0 32 32"><path d="M1 3h10l2 3h17v24H1z" fill="#f3d983" stroke="#b9962f"/><path d="M3 8h25v5H3z" fill="#fff"/><path d="M1 11h30v16H1z" fill="#fae9a8" stroke="#d9bb5c"/><path d="M6 29V19h20v10h-5v-5H11v5z" fill="#7fc0ea" stroke="#e4f5ff"/><path d="M5 3h3v3H5z" fill="#2a9d4a"/><path d="M17 6h3v3h-3z" fill="#2a7de0"/></symbol>
<symbol id="eico" viewBox="0 0 32 32"><circle cx="16" cy="16" r="14" fill="#5bb531" stroke="#e9f8dd"/><path d="M9 17h14q0-8-7-8t-7 8q0 7 7 7 5 0 7-4" fill="none" stroke="#fff" stroke-width="3"/><path d="M3 29Q10 6 28 3" fill="none" stroke="#9ee35b" stroke-width="2"/></symbol>
<symbol id="k6" viewBox="0 0 32 32"><rect width="32" height="32" rx="5" fill="#1689e8"/><path d="M8 7q1 4 4 4h8q3 0 4-4" fill="none" stroke="#fff" stroke-width="2.500"/><path d="M11 12v8q0 6 5 6t5-6v-8z" fill="none" stroke="#fff" stroke-width="4"/></symbol>
<symbol id="wx" viewBox="0 0 32 32"><ellipse cx="12" cy="12" rx="11" ry="10" fill="#2dbd55"/><path d="M4 18l-1 6 6-3z" fill="#2dbd55"/><ellipse cx="22" cy="20" rx="9" ry="8" fill="#eee"/><path d="M26 26l3 4-6-2z" fill="#eee"/><g fill="#1a5f2d"><circle cx="8" cy="9" r="1.500"/><circle cx="15" cy="9" r="1.500"/></g><g fill="#666"><circle cx="19" cy="18" r="1.300"/><circle cx="25" cy="18" r="1.300"/></g></symbol>
<symbol id="nx" viewBox="0 0 32 32"><circle cx="16" cy="18" r="12" fill="url(#gGlobe)"/><path d="M26 10q8 4 1 11T5 28" fill="none" stroke="#f2a92a" stroke-width="3"/><path d="M8 23l-7 5 8 3z" fill="#f2a92a"/><path d="M4 2l13-1-2 15z" fill="#d42f3c" stroke="#8f1726"/><path d="M13 1l4 0-2 15z" fill="#f06a6a"/></symbol>
<symbol id="wps" viewBox="0 0 32 32"><path d="M1 4h13v5H8l3 12 5-11h6v5l-6 14h-6L3 9z" fill="#f23c1e"/><path d="M18 4h13l-6 25h-6l1-5 5-15h-7z" fill="#f2501e"/><path d="M17 10h5v8l-3 8z" fill="#ff7c2e"/></symbol>
<symbol id="y1" viewBox="0 0 16 16"><path d="M1 1h14v14H1z" fill="#e8eefa" stroke="#445"/><path d="M5 13V4h4q3 0 3 3t-3 2H7" fill="none" stroke="#2b3f7a" stroke-width="1.500"/></symbol>
<symbol id="y3" viewBox="0 0 16 16"><path d="M0 1h16v14H0z" fill="#1b87e5"/><path d="M3 5h7v6H3zM10 8l3-2v4z" fill="none" stroke="#fff" stroke-width="1.200"/><path d="M5 6l3 2-3 2z" fill="#fff"/></symbol>
<symbol id="y4" viewBox="0 0 16 16"><path d="M0 0h16v16H0z" fill="#fff"/><circle cx="8" cy="7" r="5" fill="none" stroke="#2b8de8" stroke-width="1.800"/><path d="M11 10l3 4" stroke="#f29a2c" stroke-width="1.800"/></symbol>
<symbol id="y5" viewBox="0 0 16 16"><path d="M1 5h3l4-4v14l-4-4H1z" fill="#fff"/><path d="M10 5q2 3 0 6M13 3q3 5 0 10" fill="none" stroke="#fff" stroke-width="1.300"/></symbol>
<symbol id="y6" viewBox="0 0 16 16"><circle cx="8" cy="8" r="7" fill="#2b7fc4" stroke="#cfe8ff" stroke-width="1.500"/><path d="M5 5l6 7" stroke="#fff" stroke-width="2"/><circle cx="6" cy="6" r="2.500" fill="#fff"/></symbol>
<symbol id="y7" viewBox="0 0 16 16"><path d="M0 0h15v15H0z" fill="#1b9fe5"/><path d="M3 3h9M7 3v8h4" fill="none" stroke="#fff" stroke-width="2"/><path d="M8 8h8v4q-2 3-4 4-3-1-4-4z" fill="#2dbd45"/><path d="M10 11l2 2 3-3" stroke="#fff" fill="none"/></symbol>
<symbol id="y8" viewBox="0 0 16 16"><path d="M2 1h5v4h1v6H1V5h1z" fill="#a8adb2" stroke="#666"/><circle cx="11" cy="11" r="5" fill="#2d9d47"/><path d="M8 11l2 2 4-4" stroke="#fff" stroke-width="1.500" fill="none"/></symbol>
<symbol id="y9" viewBox="0 0 16 16"><ellipse cx="8" cy="8" rx="6" ry="7" fill="#111"/><ellipse cx="8" cy="11" rx="4" ry="4" fill="#fff"/><path d="M2 8q6 3 12 0l0 3q-6 2-12-1z" fill="#e02a20"/><path d="M6 3h1v2H6zM9 3h1v2H9z" fill="#fff"/><path d="M5 6q3-1 6 0-3 2-6 0z" fill="#f7b51c"/><path d="M3 15h4M9 15h4" stroke="#f7b51c" stroke-width="2"/></symbol>
<symbol id="y10" viewBox="0 0 16 16"><circle cx="8" cy="8" r="7.500" fill="#f3d21c"/><path d="M8 4v8M4 8h8" stroke="#198a3a" stroke-width="2.500"/></symbol>
<symbol id="y11" viewBox="0 0 16 16"><path d="M4 4h11v8H4zM9 12v3M6 15h7M1 1v5h3M2 6v7" fill="none" stroke="#fff" stroke-width="1.300"/></symbol>
<symbol id="news" viewBox="0 0 20 20"><path d="M4 1h15v17H2V6h2z" fill="none" stroke="#fff" stroke-width="2"/><path d="M7 5h4v4H7zM13 5h4M13 8h4M7 12h10M7 15h10" stroke="#fff" fill="none" stroke-width="1.500"/></symbol>
</svg>

<header class="titlebar">
  <span class="nxlogo">NX</span><i class="vs"></i>
  <button class="q w32"><svg><use href="#save"/></svg></button><i class="vs"></i>
  <button class="q w26"><svg><use href="#undo"/></svg></button><svg class="tri"><use href="#tri"/></svg>
  <button class="q w22"><svg><use href="#redo"/></svg></button><i class="vs"></i>
  <button class="q w30"><svg><use href="#cut"/></svg></button><button class="q w22"><svg><use href="#copy"/></svg></button><button class="q w22"><svg><use href="#paste"/></svg></button><i class="vs"></i>
  <button class="q w30"><svg><use href="#scurve"/></svg></button><svg class="tri"><use href="#tri"/></svg><i class="vs"></i>
  <button class="q w30"><svg><use href="#hand"/></svg></button><i class="vs"></i>
  <button class="q winbtn"><svg><use href="#win"/></svg>窗口</button><svg class="tri"><use href="#tri"/></svg><svg class="tri over"><use href="#tri"/></svg>
  <h1>NX 10 - 建模 - [绘制螺旋缠绕状产品-整体变形命令.prt （修改的 ） ]</h1>
  <span class="siemens">SIEMENS</span>
  <div class="wc"><button><svg><use href="#min"/></svg></button><button><svg><use href="#rest"/></svg></button><button><svg><use href="#x"/></svg></button></div>
</header>

<nav class="tabs">
  <a class="file" href="#">文件(F)</a><a class="on" href="#">主页</a><a href="#">装配</a><a href="#">曲线</a><a href="#">曲面</a><a href="#">分析</a><a href="#">视图</a><a href="#">渲染</a><a href="#">工具</a><a href="#">应用模块</a>
  <div class="search"><input type="text" placeholder="查找命令" aria-label="查找命令"><svg><use href="#mag"/></svg></div>
  <div class="tabtools"><button><svg><use href="#full"/></svg></button><button><svg><use href="#up"/></svg></button><button><span class="q1">?</span></button></div>
  <div class="wc dark"><button><svg><use href="#min"/></svg></button><button><svg><use href="#rest"/></svg></button><button><svg><use href="#x"/></svg></button></div>
</nav>

<div class="ribbon">
  <section class="grp sketch"><div class="gb">
    <button class="big"><svg><use href="#sketch"/></svg>草图</button>
    <button class="big"><svg><use href="#flag"/></svg>完成草图</button>
    <div class="gallery">
      <button><svg><use href="#g1"/></svg></button><button><svg><use href="#g2"/></svg></button><button><svg><use href="#g3"/></svg></button><button><svg><use href="#g4"/></svg></button><button><svg><use href="#g5"/></svg></button><button><svg><use href="#g6"/></svg></button><button><svg><use href="#g7"/></svg></button>
      <button><svg><use href="#g8"/></svg></button><button><svg><use href="#g9"/></svg></button><button><svg><use href="#g10"/></svg></button><button><svg><use href="#g11"/></svg></button><button><svg><use href="#g12"/></svg></button><button><svg><use href="#g13"/></svg></button><button><svg><use href="#g14"/></svg></button>
    </div>
    <div class="gscroll"><svg class="tri flip"><use href="#tri"/></svg><svg class="tri"><use href="#tri"/></svg><svg class="tri over"><use href="#tri"/></svg></div>
    <button class="big wide"><svg><use href="#quick"/></svg>快速尺寸<svg class="tri"><use href="#tri"/></svg></button>
    <button class="big more"><span><svg><use href="#more1"/></svg></span>更多<svg class="tri"><use href="#tri"/></svg></button>
  </div><footer>直接草图<svg class="tri"><use href="#tri"/></svg></footer></section>

  <section class="grp feat"><div class="gb">
    <button class="big"><svg><use href="#datum"/></svg>基准平面<svg class="tri"><use href="#tri"/></svg></button>
    <button class="big"><svg><use href="#extrude"/></svg>拉伸<svg class="tri"><use href="#tri"/></svg></button>
    <button class="big slim"><svg><use href="#hole"/></svg>孔</button>
    <div class="list l1"><button><svg><use href="#arrf"/></svg>阵列特征</button><button><svg><use href="#unite"/></svg>合并<svg class="tri"><use href="#tri"/></svg></button><button><svg><use href="#shell"/></svg>抽壳</button></div>
    <button class="big"><svg><use href="#fillet"/></svg>边倒圆<svg class="tri"><use href="#tri"/></svg></button>
    <div class="list l2"><button><svg><use href="#chamf"/></svg>倒斜角</button><button><svg><use href="#trimb"/></svg>修剪体</button><button><svg><use href="#draft"/></svg>拔模</button></div>
    <button class="big more"><span><svg><use href="#pad"/></svg></span>更多<svg class="tri"><use href="#tri"/></svg></button>
  </div><footer>特征<svg class="tri"><use href="#tri"/></svg></footer></section>

  <section class="grp sync"><div class="gb">
    <button class="big"><svg><use href="#moveface"/></svg>移动面</button>
    <div class="list l3"><button><svg><use href="#syn1"/></svg>偏置区域</button><button><svg><use href="#syn2"/></svg>替换面</button><button><svg><use href="#syn3"/></svg>删除面</button></div>
    <button class="big more"><span><svg><use href="#swirl"/></svg></span>更多<svg class="tri"><use href="#tri"/></svg></button>
  </div><footer>同步建模<svg class="tri"><use href="#tri"/></svg></footer></section>

  <section class="grp surf"><div class="gb"><button class="big"><svg><use href="#mesh"/></svg>曲面<svg class="tri"><use href="#tri"/></svg></button></div></section>

  <section class="grp n104"><div class="gs"><div><button><svg><use href="#std1"/></svg></button><button><svg><use href="#layers"/></svg></button><button><svg><use href="#layers2"/></svg></button><i></i><button><svg><use href="#tag"/></svg></button></div><div><button><svg><use href="#std2"/></svg></button><button><svg><use href="#std3"/></svg></button><button><svg><use href="#std4"/></svg></button><i></i><button><svg><use href="#std5"/></svg></button></div></div><footer class="lf">标准化工具 - G...<svg class="tri"><use href="#tri"/></svg></footer></section>
  <section class="grp n52"><div class="gs"><div><button><svg><use href="#gear1"/></svg></button><button><svg><use href="#gear2"/></svg></button></div><div><button><svg><use href="#handl"/></svg></button></div></div><footer class="lf">齿轮...<svg class="tri"><use href="#tri"/></svg></footer></section>
  <section class="grp n58"><div class="gs"><div><button><svg><use href="#spring1"/></svg></button><button><svg><use href="#spring2"/></svg></button></div><div><button><svg><use href="#disc"/></svg></button><i></i><button><svg><use href="#springx"/></svg></button></div></div><footer class="lf">弹簧...<svg class="tri"><use href="#tri"/></svg></footer></section>
  <section class="grp n52"><div class="gs"><div><button><svg><use href="#mach1"/></svg></button><button><svg><use href="#mach2"/></svg></button></div><div><button><svg><use href="#mach3"/></svg></button><button><svg><use href="#mach4"/></svg></button></div></div><footer class="lf">加工...<svg class="tri"><use href="#tri"/></svg></footer></section>
  <section class="grp n98"><div class="gs"><div><button><svg><use href="#mt1"/></svg></button><button><svg><use href="#mt2"/></svg></button><button><svg><use href="#mt3"/></svg></button><button><svg><use href="#mt4"/></svg></button></div><div><button><svg><use href="#mt5"/></svg></button><button><svg><use href="#mt6"/></svg></button><i></i><button class="dt find"><svg><use href="#bino"/></svg><span>10<b>H7</b></span></button></div></div><footer class="lf">建模工具 - G...<svg class="tri"><use href="#tri"/></svg></footer></section>
  <section class="grp n29"><div class="gs"><div><button><svg><use href="#ycubes"/></svg></button></div><div><button><svg><use href="#ycubes"/></svg></button></div></div><footer class="lf">?..<svg class="tri"><use href="#tri"/></svg></footer></section>
  <section class="grp n288"><div class="gs"><div><button><svg><use href="#d1"/></svg></button><i></i><button class="dt">1.00</button><button class="dt">1.00<b>±.05</b></button><button class="dt">1.00<b>+.05</b><b>-.02</b></button><button class="dt">1.00<b class="g">+.00</b><b>-.05</b></button><button class="dt">1.00<b class="g">+.05</b><b>-.02</b></button><button class="dt"><u>1.00</u></button><button class="dt">(1.00)</button><button class="dt bl">10H7</button><button class="dt bl">10H7<b>(8.01)</b></button><button class="dt bl">10H7<b>(8.015)</b></button><button class="dt bl">10<b>(8.015)</b></button></div><div><button><svg viewBox="0 0 16 16"><path d="M1 15L14 2" stroke="#c8372f"/><path d="M1 15l1-4 3 3z" fill="#c8372f"/><path d="M2 6l3 3M2 6l2-2 2 2-2 1 2 1M8 3l2-2 2 2-2 2z" stroke="#c8372f" fill="none"/></svg></button><button><svg viewBox="0 0 16 16"><path d="M1 14l4-5h11" fill="none" stroke="#c8372f"/><path d="M1 14l1-4 2 2z" fill="#c8372f"/><path d="M4 7V2h2v2H4l2 3M9 2H8v5h1M11 3h1v3h-1zM14 2h1v5h-1" fill="none" stroke="#c8372f" stroke-width=".8"/></svg></button><i></i><button><svg><use href="#d4"/></svg></button><button><svg><use href="#d5"/></svg></button><button><svg><use href="#back"/></svg></button></div></div><footer class="lf">尺寸快速格式化工具</footer></section>
  <section class="grp asm"><div class="gb"><button class="proc" disabled><svg><use href="#asmg"/></svg>处理装配</button><div class="list"><button><svg><use href="#cons"/></svg>装配约束</button><button><svg><use href="#ycubes"/></svg>移动组件</button></div></div></section>
</div>

<div class="toolbar">
  <button class="menubtn"><svg><use href="#menu"/></svg><span>菜单(<u>M</u>)</span><svg class="tri"><use href="#tri"/></svg></button><i class="vs"></i>
  <span class="sel s1"><select aria-label="选择过滤器"><option>没有选择过滤器</option></select></span>
  <span class="sel s2"><select aria-label="选择范围"><option>仅在工作部件内</option></select></span>
  <div class="tbs first"><button><svg><use href="#t1"/></svg></button><button><svg><use href="#t2"/></svg></button><button><svg><use href="#t3"/></svg></button><svg class="tri"><use href="#tri"/></svg><button><svg><use href="#t4"/></svg></button><button><svg><use href="#t5"/></svg></button><button><svg><use href="#t6"/></svg></button><svg class="tri"><use href="#tri"/></svg><button><svg><use href="#t7"/></svg></button><button><svg><use href="#t8"/></svg></button></div>
  <span class="sel s3"><select aria-label="曲线规则" disabled><option>相连曲线</option></select></span>
  <div class="tbs"><button><svg><use href="#t9"/></svg></button><button><svg><use href="#t10"/></svg></button><button><svg><use href="#t11"/></svg></button><button><svg><use href="#t12"/></svg></button><button><svg><use href="#t13"/></svg></button><button><svg><use href="#t14"/></svg></button><button><svg><use href="#t15"/></svg></button><button><svg><use href="#t16"/></svg></button><button><svg><use href="#t17"/></svg></button><button><svg><use href="#t18"/></svg></button><button><svg><use href="#t12"/></svg></button><button><svg><use href="#t19"/></svg></button></div><i class="vs"></i>
  <div class="tbs view"><button><svg><use href="#v1"/></svg></button><button><svg><use href="#v2"/></svg></button><button><svg><use href="#v3"/></svg></button><button><svg><use href="#v4"/></svg></button><svg class="tri"><use href="#tri"/></svg><button><svg><use href="#v5"/></svg></button><svg class="tri"><use href="#tri"/></svg><button><svg><use href="#cube"/></svg></button><svg class="tri"><use href="#tri"/></svg><button><svg><use href="#v6"/></svg></button><svg class="tri"><use href="#tri"/></svg></div><i class="vs"></i>
</div>

<main>
  <aside class="rail">
    <button class="cfg"><svg><use href="#r0"/></svg></button><button><svg><use href="#r1"/></svg></button><button><svg><use href="#r2"/></svg></button><button class="on"><svg><use href="#r3"/></svg></button><button><svg><use href="#r4"/></svg></button><button class="sp"><svg><use href="#r5"/></svg></button><button class="sp"><svg><use href="#r6"/></svg></button><button class="sp"><svg><use href="#clock"/></svg></button><button><svg><use href="#r8"/></svg></button><button><svg><use href="#r9"/></svg></button><button><svg><use href="#r10"/></svg></button><button><svg><use href="#r11"/></svg></button><button><svg><use href="#r12"/></svg></button>
  </aside>
  <section class="nav">
    <h2>部件导航器<button class="maxi" aria-label="最大化"></button></h2>
    <div class="treebox">
      <div class="rows">
      <table>
        <thead><tr><th>名称<i class="asc"></i></th><th>最新</th></tr></thead>
        <tbody>
        <tr><td><div class="n lv0"><i class="ln"></i><svg><use href="#clock"/></svg>历史记录模式</div></td><td></td></tr>
        <tr><td><div class="n lv0"><i class="ex">+</i><svg><use href="#n1"/></svg>模型视图</div></td><td></td></tr>
        <tr><td><div class="n lv0"><i class="ex">+</i><svg class="ck"><use href="#chk"/></svg><svg><use href="#n2"/></svg>摄像机</div></td><td></td></tr>
        <tr><td><div class="n lv0"><i class="ln"></i><svg><use href="#foldx"/></svg>用户表达式</div></td><td></td></tr>
        <tr><td><div class="n lv0"><i class="ex">−</i><svg><use href="#fold"/></svg>模型历史记录</div></td><td></td></tr>
        <tr><td><div class="n lv1"><i class="ln"></i><label><input type="checkbox" checked><svg><use href="#cyl"/></svg>圆柱 (0)</label></div></td><td><svg><use href="#chk"/></svg></td></tr>
        <tr><td><div class="n lv1"><i class="ln"></i><label><input type="checkbox" checked><svg><use href="#pln"/></svg>固定基准平面 (1)</label></div></td><td><svg><use href="#chk"/></svg></td></tr>
        <tr><td><div class="n lv1 b"><i class="ln"></i><label><input type="checkbox" checked><svg><use href="#skt"/></svg>草图 (2) "SKETCH_...</label></div></td><td><svg><use href="#chk"/></svg></td></tr>
        </tbody>
      </table>
      </div>
      <div class="hbar"><i class="la"></i><span class="thumb"><i></i></span><i class="ra"></i></div>
    </div>
    <div class="splitter"></div>
    <button class="sec">相依性<svg><use href="#chevd"/></svg></button>
    <button class="sec">细节<svg><use href="#chevd"/></svg></button>
    <button class="sec">预览<svg><use href="#chevd"/></svg></button>
  </section>
  <section class="canvas">
    <svg viewBox="300 180 1620 838" preserveAspectRatio="xMidYMid meet">
      <rect x="795" y="344" width="480" height="480" fill="url(#gPlane)" stroke="#13787f" stroke-width="2"/>
      <circle cx="1035" cy="584" r="173" fill="#d6a317" stroke="#a4926a" stroke-width="2"/>
      <circle cx="1035" cy="584" r="173" fill="none" stroke="#0e7c22" stroke-width="2" stroke-dasharray="6 10 3 9"/>
      <rect x="993" y="542" width="84" height="84" fill="#ac9531" stroke="#2a9df0" stroke-width="2"/>
      <g fill="none" stroke="#b8a262"><path d="M1035 427A158 158 0 0 1 1171 662"/><path d="M1035 584 1171 662"/></g>
      <g fill="none" stroke="#7c9ecf" stroke-width="2"><path d="M1007 254h22M1018.500 256V580" stroke-width="1"/><path d="M947 437v90M1120 437v90M1035 496h100" stroke="#a09a80" stroke-dasharray="12 3 4 3"/><path d="M946 440v85M1119 440v85M1040 495h92" stroke="#93a6bb" stroke-width="1"/></g>
      <path d="M1018 256l3 9h-6zM1018 581l3-9h-6zM946 526l3-9h-6zM1119 530l3-9h-6z" fill="#6e9be0"/>
      <g fill="none" stroke="#3a6cc4"><path d="M948 390.500h174M1035 410.500h123M1147.500 411v85M1140 497h18M948 380v52M1122 380v52M935 433h12M1108 433h12"/><path d="M948 473v18M1121 473v18" stroke-width="3"/><path d="M1115 390q10 4 17-6" stroke-width="2"/><path d="M1037 486h9v10" stroke="#66707a" stroke-width="2"/></g>
      <path d="M950 390.500l10-2v4zM1121 390.500l-10-2v4zM1147.500 411l-2 9h4zM1147.500 496l-2-9h4z" fill="#2f6ad0"/>
      <g class="dim"><text x="1055" y="387">p9:3.0</text><text transform="translate(1144 461) rotate(-90)">p10:1.5</text><text class="f" transform="translate(1015 430) rotate(-90)">5.7</text><text class="f" transform="translate(943 490) rotate(-90)">1.6</text><text class="f" transform="translate(1116 492) rotate(-90)">1.7</text><text class="f" x="1074" y="493">1.5</text><text transform="translate(1024 775) rotate(-90)">p8:0.0</text></g>
      <g fill="none" stroke="#0a0af0" stroke-width="2"><circle cx="1035" cy="406" r="91"/><circle cx="881" cy="673" r="91"/><circle cx="1189" cy="673" r="91"/><path d="M1035 254V404"/><path d="M1035 411v16" stroke-width="3"/><path d="M1035 427v69" stroke="#8d7cc4"/></g>
      <circle cx="1035" cy="254" r="3" fill="#0a0af0"/>
      <g fill="none" stroke="#3a6cc4" stroke-width="1.500"><circle cx="948" cy="433" r="6"/><circle cx="1122" cy="433" r="6"/><circle cx="1035" cy="496" r="6"/></g>
      <g fill="#a99a72"><circle cx="948" cy="433" r="4"/><circle cx="1122" cy="433" r="4"/><circle cx="1035" cy="496" r="4"/><circle cx="1135" cy="497" r="3"/><circle cx="948" cy="528" r="3"/><circle cx="1122" cy="531" r="3"/></g>
      <rect x="1030" y="401" width="10" height="10" fill="#d3f56c" stroke="#9cba4a"/>
      <path d="M1035 502V582" stroke="#5f8c2a" stroke-width="3"/><path d="M1035 504l5 17h-10z" fill="#2d8f37"/>
      <path d="M1030 584h-25" stroke="#c78b85" stroke-width="2"/><path d="M1008 584h-40" stroke="#e64a34" stroke-width="3"/><path d="M953 584l20-5v10z" fill="#e8503a"/>
      <g class="ax"><text x="1040" y="526" fill="#3d9142">YC</text><text x="978" y="579" fill="#dc4b26">XC</text><text x="942" y="589" fill="#dc3b2b">X</text><text x="1036" y="584" fill="#3b69b4">ZC</text></g>
      <path d="M1165 322 1126 402" stroke="#c09a55"/>
      <circle cx="1035" cy="584" r="6" fill="url(#gBall)"/><circle cx="1171" cy="662" r="4" fill="url(#gBall)"/><circle cx="1126" cy="402" r="4" fill="url(#gBall)"/>
      <g fill="#b4a56a"><path d="M881 667l5 6-5 5-5-5zM1189 667l5 6-5 5-5-5z"/></g><g fill="#0a0af0"><circle cx="881" cy="673" r="3"/><circle cx="1189" cy="673" r="3"/></g>
      <g fill="none" stroke="#3d72c8" stroke-width="2"><path d="M1038 735q-9 8-5 13t10-7M1027 747l-3 8M1026 768q5-10 13-7t-3 7M1029 765q10 6 13-5"/></g>
      <path d="M1027 746l1 9-4-2zM1027 768l-4-8 6 3z" fill="#3d72c8"/>
      <circle cx="1131" cy="744" r="8" fill="none" stroke="#3d72c8" stroke-width="5" stroke-linecap="round" stroke-dasharray="0 6.283"/>
      <rect x="1166" y="301" width="92" height="27" fill="#f7f8fb" stroke="#b8bbbf"/><path d="M1169 304v22M1174 304v22" stroke="#999" stroke-width="2" stroke-dasharray="2 2"/>
      <text class="tip" x="1183" y="319">要阵列的曲线</text>
      <path d="M339 950v-27h27v27z" fill="#d4d4d4" stroke="#bbb"/><path d="M366 946v-33" stroke="#1f4fe0" stroke-width="3"/><path d="M366 905l3 11h-6z" fill="#0a3df0"/><path d="M361 950h-31" stroke="#3fa047" stroke-width="3"/><path d="M321 950l12-3v6z" fill="#1e8a2d"/><circle cx="366" cy="950" r="4" fill="#d9cfcf"/><path d="M363 947l6 6M369 947l-6 6" stroke="#d33"/>
      <g class="ax"><text x="362" y="904" fill="#3b62e0">Z</text><text x="312" y="954" fill="#3fa047">Y</text></g>
      <circle cx="1559" cy="565" r="29" fill="none" stroke="#69dc70" stroke-width="5"/><circle cx="1559" cy="565" r="8" fill="none" stroke="#27a9bd" stroke-width="4"/><circle cx="1559" cy="565" r="6" fill="none" stroke="#dff3f5"/><path d="M1552 561a8 8 0 0 1 10-3" fill="none" stroke="#c5eef3" stroke-width="3"/><path d="M1562 572a8 8 0 0 0 5-7" fill="none" stroke="#4f7486" stroke-width="3"/>
    </svg>
  </section>
</main>

<div class="status"><svg><use href="#flag"/></svg><svg><use href="#full"/></svg><svg class="last"><use href="#nx"/></svg></div>

<footer class="taskbar">
  <button class="orb"><svg><use href="#orb"/></svg></button>
  <button class="pin"><svg><use href="#k1"/></svg></button><button class="pin pin2"><svg><use href="#k2"/></svg></button>
  <div class="apps"><button><svg><use href="#k3"/></svg></button><button class="stack"><svg><use href="#k4"/></svg></button><button class="stack"><svg><use href="#eico"/></svg></button><button><svg><use href="#k6"/></svg></button><button><svg><use href="#wx"/></svg></button><button><svg><use href="#nx"/></svg></button><button class="act"><svg><use href="#nx"/></svg></button><button><svg><use href="#wps"/></svg></button></div>
  <div class="ime"><svg><use href="#y1"/></svg><span class="q1 q2">?</span><span><svg><use href="#rest"/></svg><i></i></span></div>
  <div class="tray"><svg><use href="#y3"/></svg><svg><use href="#eico"/></svg><svg><use href="#wps"/></svg><svg><use href="#wx"/></svg><svg><use href="#y4"/></svg><svg><use href="#y5"/></svg><svg><use href="#y6"/></svg><svg><use href="#wx"/></svg><svg><use href="#y7"/></svg><svg><use href="#y7"/></svg><svg><use href="#y8"/></svg><svg><use href="#y9"/></svg><svg><use href="#y10"/></svg><svg><use href="#y11"/></svg></div>
  <time>16:52<br>2022/1/5</time>
  <span class="news"><svg><use href="#news"/></svg><b>6</b></span>
  <button class="desk" aria-label="显示桌面"></button>
</footer>

<form class="dialog">
  <header><svg><use href="#cog"/></svg><span>阵列曲线</span><button type="button"><svg><use href="#reset"/></svg></button><button type="button"><svg><use href="#x"/></svg></button></header>
  <section class="p1">
    <h3>要阵列的曲线<svg><use href="#chev"/></svg></h3>
    <div class="row pick"><svg class="ok"><use href="#chk"/></svg><span>选择曲线 (1)</span><button type="button" class="sm"><svg><use href="#ptd"/></svg></button><button type="button" class="lg"><svg><use href="#scv"/></svg></button></div>
  </section>
  <section class="p2">
    <h3>阵列定义<svg><use href="#chev"/></svg></h3>
    <div class="row lay"><label for="lay">布局</label><span class="sel"><svg><use href="#ringi"/></svg><select id="lay"><option>圆形</option></select></span></div>
    <fieldset>
      <h4>旋转点<svg><use href="#chev"/></svg></h4>
      <div class="row point"><span class="hot"><svg><use href="#chk"/></svg>指定点</span><button type="button" class="sm"><svg><use href="#ptd"/></svg></button><button type="button" class="bolt"><svg><use href="#boltp"/></svg><i></i></button></div>
      <div class="row revr"><span>反向</span><button type="button" class="sm"><svg><use href="#rev"/></svg></button></div>
    </fieldset>
    <fieldset class="f2">
      <h4>角度方向<svg><use href="#chev"/></svg></h4>
      <div class="row fld"><label for="sp">间距</label><span class="sel"><select id="sp"><option>数量和节距</option></select></span></div>
      <div class="row fld"><label for="ct">数量</label><span class="sel"><input id="ct" type="text" value="3"><em class="blank"></em></span></div>
      <div class="row fld"><label for="an">节距角</label><span class="sel"><input id="an" type="text" value="120"><em>deg</em></span></div>
    </fieldset>
    <label class="expr"><input type="checkbox" checked>创建节距表达式</label>
  </section>
  <div class="fold"><i></i></div>
  <div class="btns"><button type="button" class="def">&lt; 确定 &gt;<i class="click"></i></button><button type="button">应用</button><button type="button">取消</button></div>
</form>
</body>
</html>
```
FILE: styles.css
```css
*{box-sizing:border-box}
body{margin:0;min-height:100vh;display:flex;flex-direction:column;position:relative;background:#fff;color:#222;font:12px/16px "Noto Sans","Noto Sans CJK SC",sans-serif;overflow-x:hidden}
button,input,select{font:inherit;color:inherit;margin:0;padding:0;border:0;background:none;border-radius:0}
button{display:flex;align-items:center;justify-content:center;white-space:nowrap}
a{color:inherit;text-decoration:none}
svg{display:block;flex:none}
h1,h2,h3,h4{margin:0;font-weight:400}
.defs{position:absolute;width:0;height:0}
i,em{font-style:normal}
.tri{width:8px;height:5px}
.tri.over{border-top:1px solid #222;height:6px}
.tri.flip{transform:rotate(180deg);opacity:.5}
.vs{width:1px;height:20px;background:#dcdcdc;flex:none}
.q1{width:14px;height:14px;border-radius:50%;background:#4a80d4;color:#fff;font:700 11px/14px "Liberation Sans",sans-serif;text-align:center}

.titlebar{height:26px;display:flex;align-items:center}
.nxlogo{width:41px;padding-left:3px;font:700 21px/26px "Open Sans",sans-serif;color:#8ba3b3}
.q svg,.wc svg{width:15px;height:15px}
.titlebar svg.tri{margin:0 2px}
.w32{width:32px}.w30{width:30px}.w26{width:26px}.w22{width:22px}
.winbtn{gap:4px;padding:0 2px 0 6px;font-size:11px}
.titlebar h1{flex:1;text-align:center;font-size:12px;color:#111}
.siemens{font:700 12px/26px "Open Sans",sans-serif;color:#0b96a0;width:60px;margin-right:16px}
.wc{display:flex;color:#555;margin-right:3px}
.wc button{width:23px;height:24px}

.tabs{height:28px;display:flex;align-items:center;background:#cddbdb;font-size:13px;line-height:28px}
.tabs a{padding:0 13px;height:28px}
.tabs .file{background:#638e8b;color:#fff;width:81px;padding:0;text-align:center;margin-right:2px;white-space:nowrap}
.tabs .on{background:#fff;color:#2e86b8}
.search{margin-left:auto;width:125px;height:20px;background:#fff;border:1px solid #b3bcbc;display:flex;align-items:center;padding-right:2px}
.search input{flex:1;min-width:0;font-size:11px;padding-left:2px;outline:0}
.search input::placeholder{color:#aaa}
.search svg{width:15px;height:15px}
.tabtools{display:flex;margin-left:10px;gap:6px}
.tabtools button{width:20px}
.tabtools svg{width:15px;height:15px}
.dark{color:#111}

.ribbon{height:94px;display:flex;border-bottom:1px solid #d8d8d8;font-size:11px;overflow:hidden}
.grp{height:86px;margin-top:5px;display:flex;flex-direction:column;flex:none;border-right:1px solid #dcdcdc;margin-bottom:3px}
.gb{display:flex;height:68px}
.grp footer{margin-top:auto;position:relative;text-align:center;color:#3a8ab5;line-height:14px;padding-right:24px;white-space:nowrap}
.grp footer .tri{position:absolute;right:7px;top:5px}
.grp footer.lf{text-align:left;padding:0 0 0 2px}
.grp .lf .tri{right:6px}
.sketch{width:467px;padding-left:6px}
.feat{width:370px;padding-left:11px}
.grp.feat footer{padding-right:32px}
.sync{width:171px;padding-left:4px}
.surf{width:43px}
.n104{width:104px}.n52{width:52px}.n58{width:58px}.n98{width:98px}.n29{width:29px}.n288{width:288px}
.big{width:46px;flex-direction:column;justify-content:flex-start;line-height:14px;gap:6px}
.big svg{width:32px;height:32px}
.big .tri{width:8px;height:5px}
.slim{width:34px}.wide{width:60px;margin-left:3px}.more{width:38px;margin-left:3px}
.more span{width:38px;height:33px;border:1px solid #eee;border-radius:3px;display:grid;place-items:center;margin-bottom:-1px}
.more span svg{width:16px;height:16px}
.gallery{width:231px;height:66px;margin-left:12px;border:1px solid #d5d5d5;display:grid;grid-template-columns:repeat(7,1fr);grid-template-rows:repeat(2,1fr)}
.gallery svg{width:22px;height:20px}
.gscroll{width:17px;height:66px;display:flex;flex-direction:column;align-items:center;justify-content:space-between;padding:8px 0}
.list{display:flex;flex-direction:column;height:66px}
.list button{height:22px;margin-top:-4px;margin-bottom:4px;gap:5px;justify-content:flex-start}
.list svg{width:16px;height:16px}
.list .tri{width:8px;height:5px;margin-left:3px}
.l1{width:77px;padding-left:9px}.l2{width:63px;padding-left:2px}.l3{width:75px;padding-left:2px}
.gs{padding-left:4px}
.gs>div{display:flex;height:30px;align-items:center}
.gs>div:first-child{height:32px}
.gs button{width:23px;height:30px;flex:none}
.gs svg{width:16px;height:16px}
.gs i{width:1px;height:20px;margin:0 2px;background:#d0d0d0;flex:none}
.gs .dt{flex-direction:column;font:8px/7px "Liberation Sans",sans-serif}
.gs .find{width:28px;margin-left:-2px}
.find svg{width:14px;height:8px}
.find span{font-size:9px;line-height:8px}
.dt b{font-weight:400;color:#c0392b;line-height:6px}
.dt .g{color:#888}
.dt u{text-decoration:none;border:1px solid #c0392b;padding:1px 0}
.dt.bl,.dt.bl b{color:#3b3bb0}
.dt.bl b{font-size:6px}
.grp.n288 .lf{padding-left:56px}
.asm{width:168px}
.proc{color:#bbb;gap:4px;padding-left:13px;height:32px;width:89px;justify-content:flex-start}
.proc svg{width:22px;height:22px}
.asm .list{padding-left:4px}

.toolbar{height:32px;display:flex;align-items:center;font-size:11px;border-bottom:2px solid #b2b4b5}
.menubtn{width:86px;gap:4px;padding-left:3px}
.menubtn svg{width:16px;height:16px}
.menubtn .tri{width:8px;height:5px}
.sel{position:relative;display:flex;align-items:center;border:1px solid #a9a9a9;background:#fff}
.sel select{appearance:none;width:100%;height:100%;padding:0 20px 0 3px;outline:0;opacity:1}
.sel::after{content:"";position:absolute;right:5px;top:50%;margin-top:-2px;border:4px solid transparent;border-top-color:#222;border-bottom:0;pointer-events:none}
.toolbar .sel{height:20px}
.s1{width:133px;margin-left:11px}.s2{width:140px;margin-left:9px}.s3{width:140px;margin-left:10px;color:#aaa}
.s3::after{border-top-color:#999}
.tbs{display:flex;align-items:center;padding-left:4px}
.tbs button{width:25px;height:24px}
.tbs.first button{width:24px}
.tbs svg{width:16px;height:16px}
.tbs .tri{width:8px;height:5px;margin:0 2px}
.s3+.tbs{padding-left:5px;padding-right:6px}
.tbs.view{padding:0 8px}

main{flex:1;display:flex;min-height:0;border-bottom:1px solid #b2b4b5}
.rail{width:32px;background:#dedede;border-right:1px solid #b5b5b5;display:flex;flex-direction:column;flex:none}
.rail button{height:42px;padding-left:4px}
.rail svg{width:23px;height:23px}
.rail .cfg{align-items:flex-start;padding:6px 2px 0 0}
.rail .cfg svg{width:15px;height:15px}
.rail .sp{margin-top:12px}
.rail .on{background:#fff;margin:0 -1px 0 2px;padding-left:2px;border:1px solid #bbb;border-right:0}
.nav{width:268px;flex:none;padding:0 10px 5px 6px;border-right:1px solid #8e9193;display:flex;flex-direction:column}
.nav h2{height:29px;font-size:12px;line-height:29px;padding:0 7px 0 4px;display:flex;align-items:center;justify-content:space-between}
.maxi{width:12px;height:11px;border:1px solid #222;border-top-width:2px}
.treebox{flex:1;border:1px solid #d5d5d5;padding:1px 1px 0;display:flex;flex-direction:column;min-height:0}
.rows{flex:1;background:linear-gradient(90deg,transparent 199px,#eaeaea 199px,#eaeaea 200px,transparent 200px),repeating-linear-gradient(#fff 0,#fff 19px,#ececec 19px,#ececec 20px,#fafafa 20px,#fafafa 39px,#ececec 39px,#ececec 40px) 0 20px}
table{border-collapse:separate;border-spacing:0;width:100%;table-layout:fixed}
th{height:20px;padding:0 6px;text-align:left;font-weight:400;background:#efefef;border-bottom:1px solid #d0d0d0;border-right:1px solid #d0d0d0}
th:first-child{width:200px}
th:last-child{border-right:0}
.asc{display:inline-block;border:5px solid transparent;border-bottom-color:#222;border-top:0;margin-left:18px;vertical-align:2px}
td{height:20px;padding:0}
td+td{padding-left:6px}
td svg{width:13px;height:13px}
.n,.n label{display:flex;align-items:center;height:20px;white-space:nowrap}
.n svg{width:16px;height:16px;margin-right:3px}
.n input+svg{margin-right:5px}
.n .ck{width:14px;margin-right:1px}
.lv0{padding-left:6px}
.lv1{padding-left:28px}
.ln{width:10px;height:20px;border-left:1px dotted #999;margin-right:2px;position:relative;background:linear-gradient(90deg,#bbb 50%,transparent 50%) 0 10px/2px 1px repeat-x}
.lv0 .ln{margin:0 0 0 4px;width:9px}
.ex{width:9px;height:9px;border:1px solid #c5c5c5;font:9px/7px "DejaVu Sans",sans-serif;text-align:center;margin-right:4px;background:#fff}
.b{font-weight:700}
.n input{appearance:none;width:12px;height:12px;border:1px solid #111;margin-right:3px;flex:none;background:#fff}
.n input:checked::before{content:"";display:block;width:10px;height:10px;background:#10a23a;clip-path:polygon(0 50%,20% 40%,40% 60%,85% 0,100% 10%,45% 100%)}
.hbar{height:17px;background:#efefef;display:flex;align-items:center;padding:0 7px}
.la,.ra{border:4px solid transparent;border-right-color:#222;border-left:0}
.ra{border:4px solid transparent;border-left-color:#222;border-right:0;margin-left:auto}
.thumb{width:130px;height:14px;margin-left:7px;border:1px solid #999;border-radius:2px;background:linear-gradient(#f6f6f6 45%,#d8d8d8 50%);display:grid;place-items:center}
.thumb i{width:8px;height:6px;background:repeating-linear-gradient(90deg,#555 0,#555 1px,transparent 1px,transparent 3px)}
.splitter{height:5px;background:#ddd;border:1px solid #bbb;margin-top:2px}
.sec{height:24px;font-size:14px;color:#2e86b8;justify-content:space-between;padding:0 5px 0 7px;border-bottom:2px solid #d5d5d5;flex:none}
.sec svg{width:12px;height:10px}

.canvas{flex:1;min-width:0;position:relative;background:linear-gradient(#bcbfc0 0%,#c5c6c8 18%,#cfd0d2 38%,#d9dbdc 54%,#e4e5e7 78%,#ebecee 100%)}
.canvas>svg{position:absolute;inset:0;width:100%;height:100%}
.dim{font:13px "Liberation Sans",sans-serif;fill:#3c6cc0}
.dim .f{fill:#8b9cae}
.ax{font-size:12px}
.tip{font-size:12px;fill:#222}

.status{height:21px;display:flex;align-items:center;justify-content:flex-end;gap:4px;padding-right:28px}
.status svg{width:16px;height:16px}
.status .last{margin-left:8px}

.taskbar{height:40px;display:flex;align-items:center;border-top:1px solid #17456e;background:linear-gradient(30deg,#1b76c2 0,#1f7ac6 44%,#cfe4f4 50%,#2a69a5 56%,#11508f 75%) 71.7% 0/120px 40px no-repeat,linear-gradient(90deg,#185f93 0,#2f80b4 5%,#3b8fc0 9%,#5aa9cf 20%,#4faade 33%,#2f98d8 42%,#2389cf 60%,#1b76c2 70%,#11508f 70.1%,#0e4786 100%);color:#fff}
.orb{width:54px}
.orb svg{width:36px;height:36px}
.pin{width:58px}
.pin2{width:70px}
.pin svg{width:30px;height:30px}
.apps{display:flex;gap:3px;height:38px}
.apps button{width:59px;border:1px solid #bfe1f5;border-radius:3px;background:linear-gradient(135deg,rgba(220,240,250,.6),rgba(130,190,225,.45));outline:1px solid #235b85;outline-offset:0}
.apps .stack{border-right:7px double #d6edf8}
.apps .act{background:linear-gradient(#e4f2fa,#b6daee)}
.apps svg{width:32px;height:32px}
.ime{margin-left:auto;display:flex;gap:7px;height:30px;margin-right:16px}
.ime svg{width:16px;height:16px}
.ime .q2{width:16px;height:16px;line-height:14px;background:#1b2bb0;border:1px solid #c9d2f5}
.ime span svg{width:10px;height:10px}
.ime i{display:block;border:3px solid transparent;border-top-color:#fff;margin:4px 2px}
.tray{display:flex;gap:8px}
.tray svg{width:16px;height:16px}
time{width:90px;text-align:center;line-height:18px}
.news{position:relative;width:20px;margin-right:11px}
.news svg{width:20px;height:20px}
.news b{position:absolute;left:12px;top:8px;width:13px;height:14px;background:#e8240f;font-size:9px;line-height:14px;text-align:center;border-radius:2px}
.desk{width:13px;height:38px;border:1px solid #7ea4c6;background:linear-gradient(135deg,#6f96bb,#1d4f80);margin-right:1px}

.dialog{position:absolute;right:0;top:85px;width:328px;background:#e9e9e9;border:1px solid #c4c8c8;border-top:0;padding:0 5px 10px}
.dialog header{height:24px;margin:0 -6px 4px;background:#638e8b;color:#fff;display:flex;align-items:center;font-size:13px;padding:0 6px 0 8px}
.dialog header svg{width:14px;height:14px}
.dialog header span{flex:1;padding-left:10px}
.dialog header button{width:20px}
.dialog>section{background:#fff;border-bottom:1px solid #ccc}
.p1{height:70px;margin-bottom:4px}
.p2{padding-bottom:7px}
h3{height:26px;font-size:14px;line-height:26px;color:#2e86b8;display:flex;align-items:center;justify-content:space-between;padding:0 6px 0 7px}
h3 svg{width:12px;height:10px}
.row{display:flex;align-items:center}
.ok{width:14px;height:14px}
.pick{padding:0 9px 0 10px;height:39px;gap:3px}
.pick span{flex:1;padding-left:2px}
.sm{width:24px;height:24px;border:1px solid #aaa;background:#fff}
.sm svg{width:18px;height:18px}
.lg{width:32px;height:32px;border:1px solid #aaa;background:#fff}
.lg svg{width:24px;height:24px}
.lay{height:32px;padding:0 9px;justify-content:space-between}
.lay .sel{width:141px;height:26px;padding-left:4px}
.lay .sel svg{width:16px;height:16px}
fieldset{margin:0 9px;border:1px solid #dadfe1;padding:0 8px;background:#f1f5f6;min-width:0}
h4{height:24px;font-size:12px;color:#2e86b8;display:flex;align-items:center;justify-content:space-between}
h4 svg{width:10px;height:8px}
.point{margin-top:5px;gap:2px}
.hot{flex:1;height:32px;background:#ffd773;display:flex;align-items:center;gap:5px;padding-left:1px}
.hot svg{width:14px;height:14px}
.bolt{width:49px;height:32px;border:1px solid #e8cc7a;background:#fbe7ac;justify-content:flex-start;padding-left:6px}
.bolt svg{width:17px;height:21px}
.bolt i{width:17px;height:30px;margin-left:auto;border-left:1px solid #e8cc7a;display:grid;place-items:center}
.bolt i::before{content:"";border:3px solid transparent;border-top:4px solid #2e86b8;border-bottom:0}
.revr{height:32px;justify-content:space-between;padding-bottom:4px}
.f2{margin-top:3px;padding-bottom:8px}
.f2 h4{margin-bottom:4px}
.fld{height:27px;justify-content:space-between}
.fld .sel{width:141px;height:25px}
.fld input{width:80px;padding-left:4px;flex:none;outline:0}
.fld em{width:41px;height:21px;line-height:20px;padding-left:4px;margin-right:auto}
.fld .blank{background:#f3f4f6}
.expr{display:flex;align-items:center;height:25px;padding-left:9px;gap:5px}
.expr input{appearance:none;width:13px;height:13px;border:1px solid #8c8c8c;background:#e8e9ee}
.expr input:checked::before{content:"";display:block;width:9px;height:10px;margin:0 1px;background:#41569c;clip-path:polygon(0 50%,20% 40%,40% 65%,80% 0,100% 5%,45% 100%)}
.fold{height:16px;border-bottom:1px solid #ccc;display:grid;place-items:center}
.fold i{border:5px solid transparent;border-top-color:#222;border-bottom:0}
.btns{display:flex;justify-content:flex-end;gap:5px;padding:8px 10px 0}
.btns button{width:54px;height:25px;border:1px solid #aeb2b4;background:#d0d2d6}
.btns .def{background:#9bcdea;border-color:#3d9bd4;outline:1px dotted #8a7a60;outline-offset:-4px;position:relative}
.click{position:absolute;width:27px;height:27px;border:3px solid rgba(238,120,120,.7);border-radius:50%;right:-6px;top:-5px}
```
